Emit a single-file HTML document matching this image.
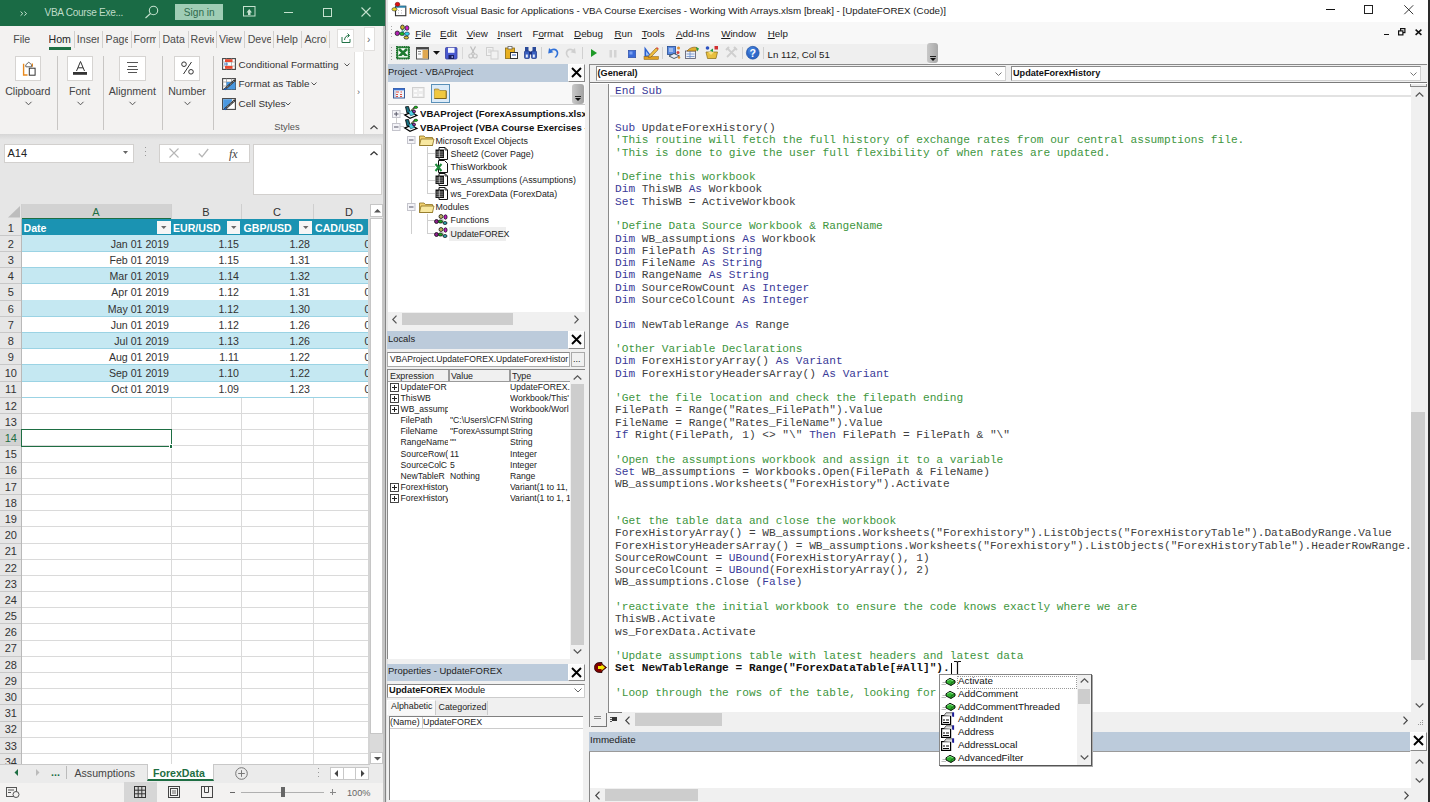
<!DOCTYPE html>
<html><head><meta charset="utf-8">
<style>
*{margin:0;padding:0;box-sizing:border-box}
html,body{width:1430px;height:802px;overflow:hidden;background:#f0f0f0;font-family:"Liberation Sans",sans-serif}
div,span{position:absolute}
.t{white-space:nowrap;line-height:1}
.clip{overflow:hidden}
svg{position:absolute;overflow:visible}
.code{font-family:"Liberation Mono",monospace;font-size:11.17px;line-height:12.28px;white-space:pre;color:#404040}
.code span{position:static}
.kw{color:#3a3a98}
.cm{color:#409640}
</style></head><body>
<div style="left:0px;top:0px;width:386px;height:802px;background:#e6e6e6"></div>
<div style="left:0px;top:0px;width:386px;height:26px;background:#1a6b45"></div>
<svg style="left:20px;top:10.5px" width="8" height="6" viewBox="0 0 8 6"><path d="M0.6 0.6 L2.8 2.6 L0.6 4.6 M4.4 0.6 L6.6 2.6 L4.4 4.6" fill="none" stroke="#c5e2cf" stroke-width="1"/></svg>
<div class="t" style="left:44.5px;top:7.81px;font-size:10.1px;color:#bfdcc8;font-weight:normal;letter-spacing:-0.3px">VBA Course Exe...</div>
<svg style="left:144px;top:5px" width="16" height="14" viewBox="0 0 16 14"><circle cx="9.5" cy="5.5" r="4.2" fill="none" stroke="#c5e2cf" stroke-width="1.1"/><line x1="6.5" y1="8.5" x2="1.5" y2="13" stroke="#c5e2cf" stroke-width="1.1"/></svg>
<div style="left:175px;top:4px;width:48px;height:16px;background:#9fcdb5"></div>
<div class="t" style="left:183.8px;top:7.62px;font-size:10.1px;color:#2e6a4c;font-weight:normal;">Sign in</div>
<svg style="left:243px;top:6px" width="13" height="11" viewBox="0 0 13 11"><rect x="0.5" y="0.5" width="11.5" height="9.5" fill="none" stroke="#c5e2cf" stroke-width="1"/><path d="M6.25 3 L3.5 6.5 H5 V9 H7.5 V6.5 H9 Z" fill="#c5e2cf"/></svg>
<div style="left:284px;top:12px;width:9px;height:1px;background:#c5e2cf"></div>
<div style="left:323px;top:8px;width:9px;height:9px;border:1px solid #c5e2cf"></div>
<svg style="left:361px;top:7px" width="10" height="10" viewBox="0 0 10 10"><path d="M0.5 0.5 L9.5 9.5 M9.5 0.5 L0.5 9.5" stroke="#c5e2cf" stroke-width="1.1"/></svg>
<div style="left:0px;top:26px;width:386px;height:108px;background:#f3f2f1"></div>
<div style="left:0px;top:134px;width:386px;height:6px;background:linear-gradient(#d6d6d6,#e6e6e6)"></div>
<div class="clip" style="left:13.2px;top:30px;width:17.5px;height:18px">
<div class="t" style="left:0;top:4.19px;font-size:10.6px;color:#4a4a4a">File</div></div>
<div class="clip" style="left:48.5px;top:30px;width:22.8px;height:18px">
<div class="t" style="left:0;top:4.19px;font-size:10.6px;color:#262626">Home</div></div>
<div class="clip" style="left:76.8px;top:30px;width:21.9px;height:18px">
<div class="t" style="left:0;top:4.19px;font-size:10.6px;color:#4a4a4a">Insert</div></div>
<div class="clip" style="left:105.6px;top:30px;width:22.9px;height:18px">
<div class="t" style="left:0;top:4.19px;font-size:10.6px;color:#4a4a4a">Page</div></div>
<div class="clip" style="left:133.6px;top:30px;width:22.7px;height:18px">
<div class="t" style="left:0;top:4.19px;font-size:10.6px;color:#4a4a4a">Formulas</div></div>
<div class="clip" style="left:162.4px;top:30px;width:22.4px;height:18px">
<div class="t" style="left:0;top:4.19px;font-size:10.6px;color:#4a4a4a">Data</div></div>
<div class="clip" style="left:190.6px;top:30px;width:23.0px;height:18px">
<div class="t" style="left:0;top:4.19px;font-size:10.6px;color:#4a4a4a">Review</div></div>
<div class="clip" style="left:218.9px;top:30px;width:23.0px;height:18px">
<div class="t" style="left:0;top:4.19px;font-size:10.6px;color:#4a4a4a">View</div></div>
<div class="clip" style="left:247.7px;top:30px;width:23.0px;height:18px">
<div class="t" style="left:0;top:4.19px;font-size:10.6px;color:#4a4a4a">Developer</div></div>
<div class="clip" style="left:276.2px;top:30px;width:22.7px;height:18px">
<div class="t" style="left:0;top:4.19px;font-size:10.6px;color:#4a4a4a">Help</div></div>
<div class="clip" style="left:304.4px;top:30px;width:23.1px;height:18px">
<div class="t" style="left:0;top:4.19px;font-size:10.6px;color:#4a4a4a">Acrobat</div></div>
<div style="left:48.5px;top:47px;width:22.5px;height:3px;background:#1e6e43"></div>
<div style="left:73.5px;top:31px;width:1px;height:17px;background:#d2d0ce"></div>
<div style="left:102px;top:31px;width:1px;height:17px;background:#d2d0ce"></div>
<div style="left:130.6px;top:31px;width:1px;height:17px;background:#d2d0ce"></div>
<div style="left:159px;top:31px;width:1px;height:17px;background:#d2d0ce"></div>
<div style="left:187.9px;top:31px;width:1px;height:17px;background:#d2d0ce"></div>
<div style="left:215.9px;top:31px;width:1px;height:17px;background:#d2d0ce"></div>
<div style="left:244.4px;top:31px;width:1px;height:17px;background:#d2d0ce"></div>
<div style="left:272.9px;top:31px;width:1px;height:17px;background:#d2d0ce"></div>
<div style="left:300.9px;top:31px;width:1px;height:17px;background:#d2d0ce"></div>
<div style="left:329px;top:31px;width:1px;height:17px;background:#d2d0ce"></div>
<div style="left:337px;top:29px;width:17px;height:19px;background:#fff;border:1px solid #e1dfdd"></div>
<svg style="left:340px;top:32px" width="12" height="12" viewBox="0 0 12 12"><path d="M2 5 V10.5 H10 V7" fill="none" stroke="#217346" stroke-width="1"/><path d="M4.5 8 Q5 3.5 9 3.5 M7.5 1.5 L9.5 3.5 L7.5 5.5" fill="none" stroke="#217346" stroke-width="1"/></svg>
<div style="left:364px;top:27px;width:11px;height:24px;background:#fff;border:1px solid #e1dfdd"></div>
<div class="t" style="left:367px;top:34.50px;font-size:10px;color:#666;font-weight:normal;">›</div>
<div style="left:15px;top:56px;width:26px;height:25px;background:#fff;border:1px solid #d6d4d2"></div>
<div style="left:66.5px;top:56px;width:26.0px;height:25px;background:#fff;border:1px solid #d6d4d2"></div>
<div style="left:119px;top:56px;width:27px;height:25px;background:#fff;border:1px solid #d6d4d2"></div>
<div style="left:174px;top:56px;width:26px;height:25px;background:#fff;border:1px solid #d6d4d2"></div>
<div style="left:56.5px;top:56px;width:1px;height:74px;background:#c8c6c4"></div>
<div style="left:102.5px;top:56px;width:1px;height:74px;background:#c8c6c4"></div>
<div style="left:161.8px;top:56px;width:1px;height:74px;background:#c8c6c4"></div>
<div style="left:212.5px;top:56px;width:1px;height:74px;background:#c8c6c4"></div>
<svg style="left:22px;top:60.5px" width="15" height="15" viewBox="0 0 15 15"><path d="M1.6 2.8 V14 H5.5" fill="none" stroke="#e8891c" stroke-width="1.4"/><path d="M10.3 2.5 V5.8" stroke="#e8891c" stroke-width="1.4"/><path d="M3.8 5.8 V3.8 L6.8 1.2 L9.6 3.8 V5.8 Z" fill="#fff" stroke="#666" stroke-width="1"/><rect x="7.3" y="7.2" width="5.8" height="7" fill="#fff" stroke="#333" stroke-width="1"/></svg>
<svg style="left:73px;top:60px" width="15" height="16" viewBox="0 0 15 16"><path d="M3.5 11 L7.5 1.5 L11.5 11 M5 7.8 H10" fill="none" stroke="#333" stroke-width="1"/><rect x="0" y="12" width="14" height="2.8" fill="#333"/></svg>
<div style="left:126.5px;top:62.2px;width:11.5px;height:1px;background:#555"></div>
<div style="left:128px;top:65.6px;width:9px;height:1px;background:#555"></div>
<div style="left:126.5px;top:69px;width:11.5px;height:1px;background:#555"></div>
<div style="left:128px;top:72.4px;width:9px;height:1px;background:#555"></div>
<svg style="left:181px;top:61px" width="13" height="14" viewBox="0 0 13 14"><circle cx="3" cy="3.2" r="2.3" fill="none" stroke="#333" stroke-width="1"/><circle cx="10" cy="10.8" r="2.3" fill="none" stroke="#333" stroke-width="1"/><path d="M10.5 1 L2.5 13" stroke="#333" stroke-width="1"/></svg>
<div class="t" style="left:-72.2px;width:200px;text-align:center;top:85.79px;font-size:10.6px;color:#444;font-weight:normal;">Clipboard</div>
<svg style="left:24.8px;top:101px" width="7" height="5" viewBox="0 0 7 5"><path d="M0.5 0.8 L3.5 3.8 L6.5 0.8" fill="none" stroke="#555" stroke-width="1"/></svg>
<div class="t" style="left:-20.400000000000006px;width:200px;text-align:center;top:85.79px;font-size:10.6px;color:#444;font-weight:normal;">Font</div>
<svg style="left:76.6px;top:101px" width="7" height="5" viewBox="0 0 7 5"><path d="M0.5 0.8 L3.5 3.8 L6.5 0.8" fill="none" stroke="#555" stroke-width="1"/></svg>
<div class="t" style="left:32.30000000000001px;width:200px;text-align:center;top:85.79px;font-size:10.6px;color:#444;font-weight:normal;">Alignment</div>
<svg style="left:129.3px;top:101px" width="7" height="5" viewBox="0 0 7 5"><path d="M0.5 0.8 L3.5 3.8 L6.5 0.8" fill="none" stroke="#555" stroke-width="1"/></svg>
<div class="t" style="left:87px;width:200px;text-align:center;top:85.79px;font-size:10.6px;color:#444;font-weight:normal;">Number</div>
<svg style="left:184px;top:101px" width="7" height="5" viewBox="0 0 7 5"><path d="M0.5 0.8 L3.5 3.8 L6.5 0.8" fill="none" stroke="#555" stroke-width="1"/></svg>
<svg style="left:222px;top:58px" width="14" height="12" viewBox="0 0 14 12"><rect x="0.6" y="0.6" width="12.8" height="10.8" fill="#fff" stroke="#444" stroke-width="1.1"/><path d="M4.5 0.6V11.4M9.5 0.6V11.4M0.6 4H13.4M0.6 8H13.4" stroke="#aaa" stroke-width="0.8"/><rect x="3" y="1.2" width="7.5" height="2.8" fill="#e84a30"/><rect x="3" y="8" width="7.5" height="2.8" fill="#e84a30"/><rect x="2.5" y="4.8" width="1" height="2.5" fill="#2a70c8"/><rect x="4.5" y="4.8" width="1" height="2.5" fill="#2a70c8"/></svg>
<div class="t" style="left:238.5px;top:60.04px;font-size:9.95px;color:#333;font-weight:normal;">Conditional Formatting</div>
<svg style="left:344px;top:63px" width="6" height="4" viewBox="0 0 6 4"><path d="M0.5 0.5 L3 3 L5.5 0.5" fill="none" stroke="#555"/></svg>
<svg style="left:222px;top:78px" width="14" height="12" viewBox="0 0 14 12"><rect x="0.6" y="0.6" width="12.8" height="10.8" fill="#fff" stroke="#444" stroke-width="1.1"/><path d="M4.5 0.6V11.4M9.5 0.6V11.4M0.6 4H13.4M0.6 8H13.4" stroke="#999" stroke-width="0.8"/><path d="M4.5 4 H13.4 V11.4 H4.5 Z" fill="#4a98e0"/><path d="M2.5 11.5 L13 2" stroke="#333" stroke-width="2.2"/><path d="M3.5 10.6 L12.5 2.6" stroke="#eee" stroke-width="0.7" stroke-dasharray="1 1"/><path d="M1.5 11.8 Q3 9.5 5 10 L3.5 12 Z" fill="#1a60c0"/></svg>
<div class="t" style="left:238.5px;top:79.04px;font-size:9.95px;color:#333;font-weight:normal;">Format as Table</div>
<svg style="left:311px;top:82px" width="6" height="4" viewBox="0 0 6 4"><path d="M0.5 0.5 L3 3 L5.5 0.5" fill="none" stroke="#555"/></svg>
<svg style="left:222px;top:97.5px" width="14" height="12" viewBox="0 0 14 12"><rect x="0.6" y="0.6" width="12.8" height="10.8" fill="#fff" stroke="#444" stroke-width="1.1"/><path d="M1.2 1.2 H10 V3 L3 10.8 H1.2 Z" fill="#4a98e0"/><path d="M2.5 11.5 L13 2" stroke="#333" stroke-width="2.2"/><path d="M3.5 10.6 L12.5 2.6" stroke="#eee" stroke-width="0.7" stroke-dasharray="1 1"/><path d="M1.5 11.8 Q3 9.5 5 10 L3.5 12 Z" fill="#1a60c0"/></svg>
<div class="t" style="left:238.5px;top:98.54px;font-size:9.95px;color:#333;font-weight:normal;">Cell Styles</div>
<svg style="left:285px;top:101.5px" width="6" height="4" viewBox="0 0 6 4"><path d="M0.5 0.5 L3 3 L5.5 0.5" fill="none" stroke="#555"/></svg>
<div class="t" style="left:187px;width:200px;text-align:center;top:123.09px;font-size:9.3px;color:#555;font-weight:normal;">Styles</div>
<div style="left:354px;top:52px;width:10px;height:82px;background:#fff;border-left:1px solid #e1dfdd;border-right:1px solid #e1dfdd"></div>
<div class="t" style="left:357px;top:88.35px;font-size:9px;color:#666;font-weight:normal;">›</div>
<svg style="left:370px;top:125px" width="8" height="5" viewBox="0 0 8 5"><path d="M0.5 4 L4 0.8 L7.5 4" fill="none" stroke="#444" stroke-width="1.1"/></svg>
<div style="left:3.5px;top:143.5px;width:130px;height:19px;background:#fff;border:1px solid #d2d0ce"></div>
<div class="t" style="left:7.5px;top:148.15px;font-size:11px;color:#222;font-weight:normal;">A14</div>
<svg style="left:123px;top:151px" width="6" height="4" viewBox="0 0 6 4"><path d="M0 0 H5 L2.5 3 Z" fill="#666"/></svg>
<div style="left:144.5px;top:147px;width:1.2px;height:1.2px;background:#999"></div>
<div style="left:144.5px;top:151px;width:1.2px;height:1.2px;background:#999"></div>
<div style="left:144.5px;top:155px;width:1.2px;height:1.2px;background:#999"></div>
<div style="left:158.5px;top:143.5px;width:91px;height:19px;background:#fff;border:1px solid #d2d0ce"></div>
<svg style="left:169px;top:148px" width="10" height="10" viewBox="0 0 10 10"><path d="M0.5 0.5 L9.5 9.5 M9.5 0.5 L0.5 9.5" stroke="#b5b5b5" stroke-width="1.1"/></svg>
<svg style="left:198px;top:148px" width="11" height="10" viewBox="0 0 11 10"><path d="M0.8 5.5 L4 8.8 L10.2 1" fill="none" stroke="#b5b5b5" stroke-width="1.3"/></svg>
<div class="t" style="left:229px;top:147.80px;font-size:12px;color:#444;font-weight:normal;font-family:'Liberation Serif';font-style:italic">fx</div>
<div style="left:252.5px;top:143.5px;width:129px;height:51px;background:#fff;border:1px solid #d2d0ce"></div>
<svg style="left:370px;top:151px" width="8" height="5" viewBox="0 0 8 5"><path d="M0.5 4 L4 0.8 L7.5 4" fill="none" stroke="#333" stroke-width="1.3"/></svg>
<div style="left:0px;top:203.5px;width:370px;height:16px;background:#e6e6e6"></div>
<div style="left:21.5px;top:203.5px;width:149.5px;height:15.8px;background:#d2d2d2"></div>
<svg style="left:4px;top:206px" width="17" height="12" viewBox="0 0 17 12"><path d="M16 0 V11.5 H4 Z" fill="#bdbdbd"/></svg>
<div style="left:171px;top:203.5px;width:1px;height:16px;background:#cfcfcf"></div>
<div style="left:241px;top:203.5px;width:1px;height:16px;background:#cfcfcf"></div>
<div style="left:312.8px;top:203.5px;width:1px;height:16px;background:#cfcfcf"></div>
<div style="left:21px;top:203.5px;width:1px;height:16px;background:#cfcfcf"></div>
<div class="t" style="left:-4px;width:200px;text-align:center;top:206.65px;font-size:11px;color:#1e6e43;font-weight:normal;">A</div>
<div class="t" style="left:106px;width:200px;text-align:center;top:206.65px;font-size:11px;color:#333;font-weight:normal;">B</div>
<div class="t" style="left:177px;width:200px;text-align:center;top:206.65px;font-size:11px;color:#333;font-weight:normal;">C</div>
<div class="t" style="left:249px;width:200px;text-align:center;top:206.65px;font-size:11px;color:#333;font-weight:normal;">D</div>
<div style="left:21.5px;top:219.3px;width:348.5px;height:544.7px;background:#fff"></div>
<div style="left:21.5px;top:218px;width:149.5px;height:2px;background:#1e6e43"></div>
<div style="left:0px;top:219.3px;width:21.5px;height:544.7px;background:#e6e6e6"></div>
<div class="t" style="left:-89.2px;width:200px;text-align:center;top:222.55px;font-size:11px;color:#333;font-weight:normal;">1</div>
<div style="left:0px;top:234.89000000000001px;width:21.5px;height:1px;background:#c8c8c8"></div>
<div class="t" style="left:-89.2px;width:200px;text-align:center;top:238.74px;font-size:11px;color:#333;font-weight:normal;">2</div>
<div style="left:0px;top:251.08px;width:21.5px;height:1px;background:#c8c8c8"></div>
<div class="t" style="left:-89.2px;width:200px;text-align:center;top:254.93px;font-size:11px;color:#333;font-weight:normal;">3</div>
<div style="left:0px;top:267.27px;width:21.5px;height:1px;background:#c8c8c8"></div>
<div class="t" style="left:-89.2px;width:200px;text-align:center;top:271.12px;font-size:11px;color:#333;font-weight:normal;">4</div>
<div style="left:0px;top:283.46px;width:21.5px;height:1px;background:#c8c8c8"></div>
<div class="t" style="left:-89.2px;width:200px;text-align:center;top:287.31px;font-size:11px;color:#333;font-weight:normal;">5</div>
<div style="left:0px;top:299.65px;width:21.5px;height:1px;background:#c8c8c8"></div>
<div class="t" style="left:-89.2px;width:200px;text-align:center;top:303.50px;font-size:11px;color:#333;font-weight:normal;">6</div>
<div style="left:0px;top:315.84px;width:21.5px;height:1px;background:#c8c8c8"></div>
<div class="t" style="left:-89.2px;width:200px;text-align:center;top:319.69px;font-size:11px;color:#333;font-weight:normal;">7</div>
<div style="left:0px;top:332.03000000000003px;width:21.5px;height:1px;background:#c8c8c8"></div>
<div class="t" style="left:-89.2px;width:200px;text-align:center;top:335.88px;font-size:11px;color:#333;font-weight:normal;">8</div>
<div style="left:0px;top:348.21999999999997px;width:21.5px;height:1px;background:#c8c8c8"></div>
<div class="t" style="left:-89.2px;width:200px;text-align:center;top:352.07px;font-size:11px;color:#333;font-weight:normal;">9</div>
<div style="left:0px;top:364.41px;width:21.5px;height:1px;background:#c8c8c8"></div>
<div class="t" style="left:-89.2px;width:200px;text-align:center;top:368.26px;font-size:11px;color:#333;font-weight:normal;">10</div>
<div style="left:0px;top:380.59999999999997px;width:21.5px;height:1px;background:#c8c8c8"></div>
<div class="t" style="left:-89.2px;width:200px;text-align:center;top:384.45px;font-size:11px;color:#333;font-weight:normal;">11</div>
<div style="left:0px;top:396.79px;width:21.5px;height:1px;background:#c8c8c8"></div>
<div class="t" style="left:-89.2px;width:200px;text-align:center;top:400.64px;font-size:11px;color:#333;font-weight:normal;">12</div>
<div style="left:0px;top:412.97999999999996px;width:21.5px;height:1px;background:#c8c8c8"></div>
<div class="t" style="left:-89.2px;width:200px;text-align:center;top:416.83px;font-size:11px;color:#333;font-weight:normal;">13</div>
<div style="left:0px;top:429.17px;width:21.5px;height:1px;background:#c8c8c8"></div>
<div style="left:0px;top:429.77000000000004px;width:21.5px;height:16.19px;background:#d2d2d2"></div>
<div class="t" style="left:-89.2px;width:200px;text-align:center;top:433.02px;font-size:11px;color:#1e6e43;font-weight:normal;">14</div>
<div style="left:0px;top:445.36px;width:21.5px;height:1px;background:#c8c8c8"></div>
<div class="t" style="left:-89.2px;width:200px;text-align:center;top:449.21px;font-size:11px;color:#333;font-weight:normal;">15</div>
<div style="left:0px;top:461.55px;width:21.5px;height:1px;background:#c8c8c8"></div>
<div class="t" style="left:-89.2px;width:200px;text-align:center;top:465.40px;font-size:11px;color:#333;font-weight:normal;">16</div>
<div style="left:0px;top:477.74px;width:21.5px;height:1px;background:#c8c8c8"></div>
<div class="t" style="left:-89.2px;width:200px;text-align:center;top:481.59px;font-size:11px;color:#333;font-weight:normal;">17</div>
<div style="left:0px;top:493.93px;width:21.5px;height:1px;background:#c8c8c8"></div>
<div class="t" style="left:-89.2px;width:200px;text-align:center;top:497.78px;font-size:11px;color:#333;font-weight:normal;">18</div>
<div style="left:0px;top:510.12px;width:21.5px;height:1px;background:#c8c8c8"></div>
<div class="t" style="left:-89.2px;width:200px;text-align:center;top:513.97px;font-size:11px;color:#333;font-weight:normal;">19</div>
<div style="left:0px;top:526.3100000000001px;width:21.5px;height:1px;background:#c8c8c8"></div>
<div class="t" style="left:-89.2px;width:200px;text-align:center;top:530.16px;font-size:11px;color:#333;font-weight:normal;">20</div>
<div style="left:0px;top:542.5000000000001px;width:21.5px;height:1px;background:#c8c8c8"></div>
<div class="t" style="left:-89.2px;width:200px;text-align:center;top:546.35px;font-size:11px;color:#333;font-weight:normal;">21</div>
<div style="left:0px;top:558.69px;width:21.5px;height:1px;background:#c8c8c8"></div>
<div class="t" style="left:-89.2px;width:200px;text-align:center;top:562.54px;font-size:11px;color:#333;font-weight:normal;">22</div>
<div style="left:0px;top:574.88px;width:21.5px;height:1px;background:#c8c8c8"></div>
<div class="t" style="left:-89.2px;width:200px;text-align:center;top:578.73px;font-size:11px;color:#333;font-weight:normal;">23</div>
<div style="left:0px;top:591.07px;width:21.5px;height:1px;background:#c8c8c8"></div>
<div class="t" style="left:-89.2px;width:200px;text-align:center;top:594.92px;font-size:11px;color:#333;font-weight:normal;">24</div>
<div style="left:0px;top:607.2600000000001px;width:21.5px;height:1px;background:#c8c8c8"></div>
<div class="t" style="left:-89.2px;width:200px;text-align:center;top:611.11px;font-size:11px;color:#333;font-weight:normal;">25</div>
<div style="left:0px;top:623.4500000000002px;width:21.5px;height:1px;background:#c8c8c8"></div>
<div class="t" style="left:-89.2px;width:200px;text-align:center;top:627.30px;font-size:11px;color:#333;font-weight:normal;">26</div>
<div style="left:0px;top:639.6400000000001px;width:21.5px;height:1px;background:#c8c8c8"></div>
<div class="t" style="left:-89.2px;width:200px;text-align:center;top:643.49px;font-size:11px;color:#333;font-weight:normal;">27</div>
<div style="left:0px;top:655.83px;width:21.5px;height:1px;background:#c8c8c8"></div>
<div class="t" style="left:-89.2px;width:200px;text-align:center;top:659.68px;font-size:11px;color:#333;font-weight:normal;">28</div>
<div style="left:0px;top:672.0200000000001px;width:21.5px;height:1px;background:#c8c8c8"></div>
<div class="t" style="left:-89.2px;width:200px;text-align:center;top:675.87px;font-size:11px;color:#333;font-weight:normal;">29</div>
<div style="left:0px;top:688.2100000000002px;width:21.5px;height:1px;background:#c8c8c8"></div>
<div class="t" style="left:-89.2px;width:200px;text-align:center;top:692.06px;font-size:11px;color:#333;font-weight:normal;">30</div>
<div style="left:0px;top:704.4000000000001px;width:21.5px;height:1px;background:#c8c8c8"></div>
<div class="t" style="left:-89.2px;width:200px;text-align:center;top:708.25px;font-size:11px;color:#333;font-weight:normal;">31</div>
<div style="left:0px;top:720.59px;width:21.5px;height:1px;background:#c8c8c8"></div>
<div class="t" style="left:-89.2px;width:200px;text-align:center;top:724.44px;font-size:11px;color:#333;font-weight:normal;">32</div>
<div style="left:0px;top:736.7800000000001px;width:21.5px;height:1px;background:#c8c8c8"></div>
<div class="t" style="left:-89.2px;width:200px;text-align:center;top:740.63px;font-size:11px;color:#333;font-weight:normal;">33</div>
<div style="left:0px;top:752.9700000000001px;width:21.5px;height:1px;background:#c8c8c8"></div>
<div class="t" style="left:-89.2px;width:200px;text-align:center;top:756.82px;font-size:11px;color:#333;font-weight:normal;">34</div>
<div style="left:0px;top:769.1600000000002px;width:21.5px;height:1px;background:#c8c8c8"></div>
<div style="left:21px;top:219.3px;width:1px;height:545px;background:#b9b9b9"></div>
<div style="left:21.5px;top:234.89000000000001px;width:348.5px;height:1px;background:#9bd3e4"></div>
<div style="left:21.5px;top:251.08px;width:348.5px;height:1px;background:#9bd3e4"></div>
<div style="left:21.5px;top:267.27px;width:348.5px;height:1px;background:#9bd3e4"></div>
<div style="left:21.5px;top:283.46px;width:348.5px;height:1px;background:#9bd3e4"></div>
<div style="left:21.5px;top:299.65px;width:348.5px;height:1px;background:#9bd3e4"></div>
<div style="left:21.5px;top:315.84000000000003px;width:348.5px;height:1px;background:#9bd3e4"></div>
<div style="left:21.5px;top:332.03px;width:348.5px;height:1px;background:#9bd3e4"></div>
<div style="left:21.5px;top:348.22px;width:348.5px;height:1px;background:#9bd3e4"></div>
<div style="left:21.5px;top:364.40999999999997px;width:348.5px;height:1px;background:#9bd3e4"></div>
<div style="left:21.5px;top:380.6px;width:348.5px;height:1px;background:#9bd3e4"></div>
<div style="left:21.5px;top:396.78999999999996px;width:348.5px;height:1px;background:#9bd3e4"></div>
<div style="left:21.5px;top:412.98px;width:348.5px;height:1px;background:#dadada"></div>
<div style="left:21.5px;top:429.17px;width:348.5px;height:1px;background:#dadada"></div>
<div style="left:21.5px;top:445.36px;width:348.5px;height:1px;background:#dadada"></div>
<div style="left:21.5px;top:461.55px;width:348.5px;height:1px;background:#dadada"></div>
<div style="left:21.5px;top:477.74px;width:348.5px;height:1px;background:#dadada"></div>
<div style="left:21.5px;top:493.93px;width:348.5px;height:1px;background:#dadada"></div>
<div style="left:21.5px;top:510.12px;width:348.5px;height:1px;background:#dadada"></div>
<div style="left:21.5px;top:526.3100000000001px;width:348.5px;height:1px;background:#dadada"></div>
<div style="left:21.5px;top:542.5px;width:348.5px;height:1px;background:#dadada"></div>
<div style="left:21.5px;top:558.6899999999999px;width:348.5px;height:1px;background:#dadada"></div>
<div style="left:21.5px;top:574.88px;width:348.5px;height:1px;background:#dadada"></div>
<div style="left:21.5px;top:591.07px;width:348.5px;height:1px;background:#dadada"></div>
<div style="left:21.5px;top:607.2600000000001px;width:348.5px;height:1px;background:#dadada"></div>
<div style="left:21.5px;top:623.45px;width:348.5px;height:1px;background:#dadada"></div>
<div style="left:21.5px;top:639.64px;width:348.5px;height:1px;background:#dadada"></div>
<div style="left:21.5px;top:655.83px;width:348.5px;height:1px;background:#dadada"></div>
<div style="left:21.5px;top:672.0200000000001px;width:348.5px;height:1px;background:#dadada"></div>
<div style="left:21.5px;top:688.21px;width:348.5px;height:1px;background:#dadada"></div>
<div style="left:21.5px;top:704.4px;width:348.5px;height:1px;background:#dadada"></div>
<div style="left:21.5px;top:720.59px;width:348.5px;height:1px;background:#dadada"></div>
<div style="left:21.5px;top:736.7800000000001px;width:348.5px;height:1px;background:#dadada"></div>
<div style="left:21.5px;top:752.9700000000001px;width:348.5px;height:1px;background:#dadada"></div>
<div style="left:21.5px;top:769.16px;width:348.5px;height:1px;background:#dadada"></div>
<div style="left:171px;top:397.39px;width:1px;height:366.61px;background:#dadada"></div>
<div style="left:241px;top:397.39px;width:1px;height:366.61px;background:#dadada"></div>
<div style="left:312.8px;top:397.39px;width:1px;height:366.61px;background:#dadada"></div>
<div style="left:21.5px;top:219.3px;width:348.5px;height:16.19px;background:#1b93b2"></div>
<div class="t" style="left:23.5px;top:222.69px;font-size:10.6px;color:#fff;font-weight:bold;">Date</div>
<div style="left:157.0px;top:221.0px;width:13.6px;height:13.2px;background:#f6f6f6"></div>
<svg style="left:161.3px;top:226.10000000000002px" width="6" height="4" viewBox="0 0 6 4"><path d="M0 0 H5.5 L2.75 3 Z" fill="#6a6a6a"/></svg>
<div class="t" style="left:173px;top:222.69px;font-size:10.6px;color:#fff;font-weight:bold;">EUR/USD</div>
<div style="left:226.5px;top:221.0px;width:13.6px;height:13.2px;background:#f6f6f6"></div>
<svg style="left:230.8px;top:226.10000000000002px" width="6" height="4" viewBox="0 0 6 4"><path d="M0 0 H5.5 L2.75 3 Z" fill="#6a6a6a"/></svg>
<div class="t" style="left:243.5px;top:222.69px;font-size:10.6px;color:#fff;font-weight:bold;">GBP/USD</div>
<div style="left:298.5px;top:221.0px;width:13.6px;height:13.2px;background:#f6f6f6"></div>
<svg style="left:302.8px;top:226.10000000000002px" width="6" height="4" viewBox="0 0 6 4"><path d="M0 0 H5.5 L2.75 3 Z" fill="#6a6a6a"/></svg>
<div class="t" style="left:315px;top:222.69px;font-size:10.6px;color:#fff;font-weight:bold;">CAD/USD</div>
<div style="left:21.5px;top:235.49px;width:348.5px;height:15.590000000000002px;background:#c5e8f2"></div>
<div style="left:171px;top:235.49px;width:1px;height:16.19px;background:rgba(255,255,255,0.0)"></div>
<div style="left:241px;top:235.49px;width:1px;height:16.19px;background:rgba(255,255,255,0.0)"></div>
<div style="left:312.8px;top:235.49px;width:1px;height:16.19px;background:rgba(255,255,255,0.0)"></div>
<div class="t" style="left:-131px;width:300px;text-align:right;top:238.78px;font-size:10.6px;color:#333;font-weight:normal;">Jan 01 2019</div>
<div class="t" style="left:-61px;width:300px;text-align:right;top:238.78px;font-size:10.6px;color:#333;font-weight:normal;">1.15</div>
<div class="t" style="left:10px;width:300px;text-align:right;top:238.78px;font-size:10.6px;color:#333;font-weight:normal;">1.28</div>
<div class="t" style="left:70.5px;width:300px;text-align:right;top:238.78px;font-size:10.6px;color:#333;font-weight:normal;">0</div>
<div style="left:21.5px;top:251.08px;width:348.5px;height:1px;background:#9bd3e4"></div>
<div style="left:171px;top:251.68px;width:1px;height:16.19px;background:rgba(255,255,255,0.0)"></div>
<div style="left:241px;top:251.68px;width:1px;height:16.19px;background:rgba(255,255,255,0.0)"></div>
<div style="left:312.8px;top:251.68px;width:1px;height:16.19px;background:rgba(255,255,255,0.0)"></div>
<div class="t" style="left:-131px;width:300px;text-align:right;top:254.97px;font-size:10.6px;color:#333;font-weight:normal;">Feb 01 2019</div>
<div class="t" style="left:-61px;width:300px;text-align:right;top:254.97px;font-size:10.6px;color:#333;font-weight:normal;">1.15</div>
<div class="t" style="left:10px;width:300px;text-align:right;top:254.97px;font-size:10.6px;color:#333;font-weight:normal;">1.31</div>
<div class="t" style="left:70.5px;width:300px;text-align:right;top:254.97px;font-size:10.6px;color:#333;font-weight:normal;">0</div>
<div style="left:21.5px;top:267.27px;width:348.5px;height:1px;background:#9bd3e4"></div>
<div style="left:21.5px;top:267.87px;width:348.5px;height:15.590000000000002px;background:#c5e8f2"></div>
<div style="left:171px;top:267.87px;width:1px;height:16.19px;background:rgba(255,255,255,0.0)"></div>
<div style="left:241px;top:267.87px;width:1px;height:16.19px;background:rgba(255,255,255,0.0)"></div>
<div style="left:312.8px;top:267.87px;width:1px;height:16.19px;background:rgba(255,255,255,0.0)"></div>
<div class="t" style="left:-131px;width:300px;text-align:right;top:271.16px;font-size:10.6px;color:#333;font-weight:normal;">Mar 01 2019</div>
<div class="t" style="left:-61px;width:300px;text-align:right;top:271.16px;font-size:10.6px;color:#333;font-weight:normal;">1.14</div>
<div class="t" style="left:10px;width:300px;text-align:right;top:271.16px;font-size:10.6px;color:#333;font-weight:normal;">1.32</div>
<div class="t" style="left:70.5px;width:300px;text-align:right;top:271.16px;font-size:10.6px;color:#333;font-weight:normal;">0</div>
<div style="left:21.5px;top:283.46px;width:348.5px;height:1px;background:#9bd3e4"></div>
<div style="left:171px;top:284.06px;width:1px;height:16.19px;background:rgba(255,255,255,0.0)"></div>
<div style="left:241px;top:284.06px;width:1px;height:16.19px;background:rgba(255,255,255,0.0)"></div>
<div style="left:312.8px;top:284.06px;width:1px;height:16.19px;background:rgba(255,255,255,0.0)"></div>
<div class="t" style="left:-131px;width:300px;text-align:right;top:287.35px;font-size:10.6px;color:#333;font-weight:normal;">Apr 01 2019</div>
<div class="t" style="left:-61px;width:300px;text-align:right;top:287.35px;font-size:10.6px;color:#333;font-weight:normal;">1.12</div>
<div class="t" style="left:10px;width:300px;text-align:right;top:287.35px;font-size:10.6px;color:#333;font-weight:normal;">1.31</div>
<div class="t" style="left:70.5px;width:300px;text-align:right;top:287.35px;font-size:10.6px;color:#333;font-weight:normal;">0</div>
<div style="left:21.5px;top:299.65px;width:348.5px;height:1px;background:#9bd3e4"></div>
<div style="left:21.5px;top:300.25px;width:348.5px;height:15.590000000000002px;background:#c5e8f2"></div>
<div style="left:171px;top:300.25px;width:1px;height:16.19px;background:rgba(255,255,255,0.0)"></div>
<div style="left:241px;top:300.25px;width:1px;height:16.19px;background:rgba(255,255,255,0.0)"></div>
<div style="left:312.8px;top:300.25px;width:1px;height:16.19px;background:rgba(255,255,255,0.0)"></div>
<div class="t" style="left:-131px;width:300px;text-align:right;top:303.54px;font-size:10.6px;color:#333;font-weight:normal;">May 01 2019</div>
<div class="t" style="left:-61px;width:300px;text-align:right;top:303.54px;font-size:10.6px;color:#333;font-weight:normal;">1.12</div>
<div class="t" style="left:10px;width:300px;text-align:right;top:303.54px;font-size:10.6px;color:#333;font-weight:normal;">1.30</div>
<div class="t" style="left:70.5px;width:300px;text-align:right;top:303.54px;font-size:10.6px;color:#333;font-weight:normal;">0</div>
<div style="left:21.5px;top:315.84px;width:348.5px;height:1px;background:#9bd3e4"></div>
<div style="left:171px;top:316.44000000000005px;width:1px;height:16.19px;background:rgba(255,255,255,0.0)"></div>
<div style="left:241px;top:316.44000000000005px;width:1px;height:16.19px;background:rgba(255,255,255,0.0)"></div>
<div style="left:312.8px;top:316.44000000000005px;width:1px;height:16.19px;background:rgba(255,255,255,0.0)"></div>
<div class="t" style="left:-131px;width:300px;text-align:right;top:319.73px;font-size:10.6px;color:#333;font-weight:normal;">Jun 01 2019</div>
<div class="t" style="left:-61px;width:300px;text-align:right;top:319.73px;font-size:10.6px;color:#333;font-weight:normal;">1.12</div>
<div class="t" style="left:10px;width:300px;text-align:right;top:319.73px;font-size:10.6px;color:#333;font-weight:normal;">1.26</div>
<div class="t" style="left:70.5px;width:300px;text-align:right;top:319.73px;font-size:10.6px;color:#333;font-weight:normal;">0</div>
<div style="left:21.5px;top:332.03000000000003px;width:348.5px;height:1px;background:#9bd3e4"></div>
<div style="left:21.5px;top:332.63px;width:348.5px;height:15.590000000000002px;background:#c5e8f2"></div>
<div style="left:171px;top:332.63px;width:1px;height:16.19px;background:rgba(255,255,255,0.0)"></div>
<div style="left:241px;top:332.63px;width:1px;height:16.19px;background:rgba(255,255,255,0.0)"></div>
<div style="left:312.8px;top:332.63px;width:1px;height:16.19px;background:rgba(255,255,255,0.0)"></div>
<div class="t" style="left:-131px;width:300px;text-align:right;top:335.92px;font-size:10.6px;color:#333;font-weight:normal;">Jul 01 2019</div>
<div class="t" style="left:-61px;width:300px;text-align:right;top:335.92px;font-size:10.6px;color:#333;font-weight:normal;">1.13</div>
<div class="t" style="left:10px;width:300px;text-align:right;top:335.92px;font-size:10.6px;color:#333;font-weight:normal;">1.26</div>
<div class="t" style="left:70.5px;width:300px;text-align:right;top:335.92px;font-size:10.6px;color:#333;font-weight:normal;">0</div>
<div style="left:21.5px;top:348.21999999999997px;width:348.5px;height:1px;background:#9bd3e4"></div>
<div style="left:171px;top:348.82000000000005px;width:1px;height:16.19px;background:rgba(255,255,255,0.0)"></div>
<div style="left:241px;top:348.82000000000005px;width:1px;height:16.19px;background:rgba(255,255,255,0.0)"></div>
<div style="left:312.8px;top:348.82000000000005px;width:1px;height:16.19px;background:rgba(255,255,255,0.0)"></div>
<div class="t" style="left:-131px;width:300px;text-align:right;top:352.11px;font-size:10.6px;color:#333;font-weight:normal;">Aug 01 2019</div>
<div class="t" style="left:-61px;width:300px;text-align:right;top:352.11px;font-size:10.6px;color:#333;font-weight:normal;">1.11</div>
<div class="t" style="left:10px;width:300px;text-align:right;top:352.11px;font-size:10.6px;color:#333;font-weight:normal;">1.22</div>
<div class="t" style="left:70.5px;width:300px;text-align:right;top:352.11px;font-size:10.6px;color:#333;font-weight:normal;">0</div>
<div style="left:21.5px;top:364.41px;width:348.5px;height:1px;background:#9bd3e4"></div>
<div style="left:21.5px;top:365.01px;width:348.5px;height:15.590000000000002px;background:#c5e8f2"></div>
<div style="left:171px;top:365.01px;width:1px;height:16.19px;background:rgba(255,255,255,0.0)"></div>
<div style="left:241px;top:365.01px;width:1px;height:16.19px;background:rgba(255,255,255,0.0)"></div>
<div style="left:312.8px;top:365.01px;width:1px;height:16.19px;background:rgba(255,255,255,0.0)"></div>
<div class="t" style="left:-131px;width:300px;text-align:right;top:368.30px;font-size:10.6px;color:#333;font-weight:normal;">Sep 01 2019</div>
<div class="t" style="left:-61px;width:300px;text-align:right;top:368.30px;font-size:10.6px;color:#333;font-weight:normal;">1.10</div>
<div class="t" style="left:10px;width:300px;text-align:right;top:368.30px;font-size:10.6px;color:#333;font-weight:normal;">1.22</div>
<div class="t" style="left:70.5px;width:300px;text-align:right;top:368.30px;font-size:10.6px;color:#333;font-weight:normal;">0</div>
<div style="left:21.5px;top:380.59999999999997px;width:348.5px;height:1px;background:#9bd3e4"></div>
<div style="left:171px;top:381.20000000000005px;width:1px;height:16.19px;background:rgba(255,255,255,0.0)"></div>
<div style="left:241px;top:381.20000000000005px;width:1px;height:16.19px;background:rgba(255,255,255,0.0)"></div>
<div style="left:312.8px;top:381.20000000000005px;width:1px;height:16.19px;background:rgba(255,255,255,0.0)"></div>
<div class="t" style="left:-131px;width:300px;text-align:right;top:384.49px;font-size:10.6px;color:#333;font-weight:normal;">Oct 01 2019</div>
<div class="t" style="left:-61px;width:300px;text-align:right;top:384.49px;font-size:10.6px;color:#333;font-weight:normal;">1.09</div>
<div class="t" style="left:10px;width:300px;text-align:right;top:384.49px;font-size:10.6px;color:#333;font-weight:normal;">1.23</div>
<div class="t" style="left:70.5px;width:300px;text-align:right;top:384.49px;font-size:10.6px;color:#333;font-weight:normal;">0</div>
<div style="left:21.5px;top:396.79px;width:348.5px;height:1px;background:#9bd3e4"></div>
<div style="left:20.5px;top:428.77000000000004px;width:151px;height:18.19px;border:1.6px solid #1e6e43"></div>
<div style="left:168.5px;top:444.46000000000004px;width:4.5px;height:4.5px;background:#1e6e43;border:1px solid #fff"></div>
<div style="left:368px;top:203.5px;width:18px;height:560.5px;background:#e6e6e6"></div>
<div style="left:368px;top:219.3px;width:2px;height:544.7px;background:#d4d4d4"></div>
<div style="left:370.3px;top:204.2px;width:13px;height:13.2px;background:#fff;border:1px solid #c6c6c6"></div>
<svg style="left:373.8px;top:209px" width="7" height="4" viewBox="0 0 7 4"><path d="M0 3.5 L3.5 0 L7 3.5 Z" fill="#555"/></svg>
<div style="left:370.3px;top:218px;width:13px;height:516.3px;background:#fff;border:1px solid #c6c6c6"></div>
<div style="left:370.3px;top:734.3px;width:13px;height:17.5px;background:#dadada"></div>
<div style="left:370.3px;top:751.7px;width:13px;height:12.8px;background:#fff;border:1px solid #c6c6c6"></div>
<svg style="left:373.8px;top:756.5px" width="7" height="4" viewBox="0 0 7 4"><path d="M0 0 L3.5 3.5 L7 0 Z" fill="#555"/></svg>
<div style="left:382.5px;top:26px;width:2.5px;height:776px;background:#c4c4c4"></div>
<div style="left:385px;top:0px;width:1.3px;height:802px;background:#858585"></div>
<div style="left:0px;top:764px;width:382.5px;height:19.4px;background:#ebebeb"></div>
<div style="left:0px;top:764px;width:370px;height:1px;background:#c8c8c8"></div>
<svg style="left:14px;top:769px" width="5" height="8" viewBox="0 0 5 8"><path d="M4 0 V7 L0.5 3.5 Z" fill="#1e6e43"/></svg>
<svg style="left:34.5px;top:769px" width="5" height="8" viewBox="0 0 5 8"><path d="M1 0 V7 L4.5 3.5 Z" fill="#bbb"/></svg>
<div class="t" style="left:51px;top:766.99px;font-size:10.6px;color:#1e6e43;font-weight:bold;">...</div>
<div style="left:65.5px;top:766px;width:1px;height:13px;background:#bbb"></div>
<div class="t" style="left:74.5px;top:767.79px;font-size:10.6px;color:#444;font-weight:normal;">Assumptions</div>
<div style="left:146.5px;top:764px;width:67px;height:17px;background:#fff;border-bottom:2px solid #1e6e43;border-left:1px solid #c8c8c8;border-right:1px solid #c8c8c8"></div>
<div class="t" style="left:153px;top:767.79px;font-size:10.6px;color:#1e6e43;font-weight:bold;">ForexData</div>
<svg style="left:234.5px;top:767px" width="13" height="13" viewBox="0 0 13 13"><circle cx="6.5" cy="6.5" r="5.8" fill="none" stroke="#777" stroke-width="1"/><path d="M6.5 3.2V9.8M3.2 6.5H9.8" stroke="#777"/></svg>
<div style="left:318px;top:768px;width:1.2px;height:1.2px;background:#999"></div>
<div style="left:318px;top:772px;width:1.2px;height:1.2px;background:#999"></div>
<div style="left:318px;top:776px;width:1.2px;height:1.2px;background:#999"></div>
<div style="left:330px;top:767px;width:38.5px;height:13px;background:#fff;border:1px solid #c8c8c8"></div>
<div style="left:342.5px;top:767px;width:1px;height:13px;background:#c8c8c8"></div>
<div style="left:355px;top:767px;width:1px;height:13px;background:#c8c8c8"></div>
<svg style="left:334px;top:770px" width="5" height="8" viewBox="0 0 5 8"><path d="M4 0 V7 L0.5 3.5 Z" fill="#444"/></svg>
<svg style="left:360px;top:770px" width="5" height="8" viewBox="0 0 5 8"><path d="M1 0 V7 L4.5 3.5 Z" fill="#444"/></svg>
<div style="left:0px;top:783.4px;width:382.5px;height:18.6px;background:#f3f2f1"></div>
<svg style="left:6px;top:785px" width="14" height="13" viewBox="0 0 14 13"><rect x="0.5" y="2.5" width="10" height="9" fill="none" stroke="#555"/><path d="M2 5H8M2 7.5H5" stroke="#555"/><circle cx="10" cy="9.5" r="3" fill="#f3f2f1" stroke="#555"/></svg>
<div style="left:123.5px;top:782px;width:33.5px;height:20px;background:#d6d6d6"></div>
<svg style="left:134px;top:786px" width="12" height="12" viewBox="0 0 12 12"><rect x="0.5" y="0.5" width="11" height="11" fill="none" stroke="#333"/><path d="M4.2 0.5V11.5M7.8 0.5V11.5M0.5 4.2H11.5M0.5 7.8H11.5" stroke="#333"/></svg>
<svg style="left:167.5px;top:786px" width="12" height="12" viewBox="0 0 12 12"><rect x="0.5" y="0.5" width="11" height="11" fill="none" stroke="#444"/><rect x="2.5" y="2.5" width="7" height="7" fill="none" stroke="#444"/><path d="M4 5H8M4 7H8" stroke="#444" stroke-width="0.8"/></svg>
<svg style="left:200.5px;top:786px" width="12" height="12" viewBox="0 0 12 12"><rect x="0.5" y="0.5" width="11" height="11" fill="none" stroke="#444"/><path d="M3.5 0.5V6.5H7.5V0.5" fill="none" stroke="#444"/></svg>
<div style="left:229.5px;top:791.5px;width:5px;height:1px;background:#666"></div>
<div style="left:241px;top:792px;width:82.5px;height:1px;background:#b0b0b0"></div>
<div style="left:280.5px;top:787px;width:4px;height:10px;background:#666"></div>
<div style="left:329.5px;top:791.5px;width:6px;height:1px;background:#888"></div>
<div style="left:332px;top:789px;width:1px;height:6px;background:#888"></div>
<div class="t" style="left:347px;top:788.68px;font-size:9.2px;color:#666;font-weight:normal;">100%</div>
<div style="left:386.3px;top:0px;width:1044px;height:802px;background:#f0f0f0"></div>
<div style="left:386.3px;top:0px;width:1.5px;height:802px;background:#e4e4e4"></div>
<div style="left:1428px;top:0px;width:2px;height:802px;background:#2a2a2a"></div>
<div style="left:387.5px;top:0px;width:1040.5px;height:22px;background:#fff"></div>
<svg style="left:390px;top:1px" width="18" height="17" viewBox="0 0 18 17"><rect x="5.5" y="5.3" width="10.3" height="9.4" fill="#fff" stroke="#333" stroke-width="1.1"/><rect x="5.5" y="4.8" width="10.3" height="1.9" fill="#2a80a8"/><path d="M8 9.5H9M11 9.5H12M8 12H9M11 12H12" stroke="#aaa" stroke-width="0.8"/><ellipse cx="7.5" cy="3.3" rx="2.3" ry="2" fill="#e01010" stroke="#600" stroke-width="0.5"/><ellipse cx="4.5" cy="8.3" rx="2.6" ry="1.7" fill="#e8d820" stroke="#333" stroke-width="0.6"/></svg>
<div class="t" style="left:409px;top:5.57px;font-size:9.8px;color:#1a1a1a;font-weight:normal;">Microsoft Visual Basic for Applications - VBA Course Exercises - Working With Arrays.xlsm [break] - [UpdateFOREX (Code)]</div>
<div style="left:1326px;top:9px;width:8.5px;height:1px;background:#111"></div>
<div style="left:1364px;top:5px;width:9.2px;height:9px;border:1px solid #222"></div>
<svg style="left:1404px;top:5px" width="9.5" height="9.5" viewBox="0 0 9.5 9.5"><path d="M0.3 0.3 L9.2 9.2 M9.2 0.3 L0.3 9.2" stroke="#222" stroke-width="0.9"/></svg>
<div style="left:387.5px;top:22px;width:1040.5px;height:42px;background:#f8f8f8"></div>
<div style="left:391.2px;top:25.5px;width:1.2px;height:1.2px;background:#aaa"></div>
<div style="left:391.2px;top:29px;width:1.2px;height:1.2px;background:#aaa"></div>
<div style="left:391.2px;top:32.5px;width:1.2px;height:1.2px;background:#aaa"></div>
<div style="left:391.2px;top:36px;width:1.2px;height:1.2px;background:#aaa"></div>
<svg style="left:394px;top:23px" width="17" height="17" viewBox="0 0 17 17"><path d="M3.5 10.5 L8 10.5 L13 10.5 M8 10.5 L8.5 5 M11.5 6 L8 10.5 L12 14.5" stroke="#2a9a9a" stroke-width="0.9" fill="none"/><ellipse cx="8.5" cy="4.3" rx="1.9" ry="2.3" fill="#c8b830" stroke="#222" stroke-width="0.8"/><ellipse cx="13" cy="5" rx="1.9" ry="2.3" fill="#d020d0" stroke="#222" stroke-width="0.8"/><ellipse cx="3.3" cy="10.3" rx="2.2" ry="2.3" fill="#b020b0" stroke="#222" stroke-width="0.8"/><ellipse cx="8" cy="10.8" rx="2.3" ry="1.8" fill="#20b820" stroke="#124" stroke-width="0.6"/><ellipse cx="13" cy="10.8" rx="2.4" ry="1.8" fill="#30d0e8" stroke="#124" stroke-width="0.6"/><ellipse cx="12.3" cy="14.6" rx="2.3" ry="1.5" fill="#e0c830" stroke="#222" stroke-width="0.8"/></svg>
<div class="t" style="left:415.2px;top:28.87px;font-size:9.8px;color:#1a1a1a;font-weight:normal;text-decoration-thickness:1px;text-underline-offset:1px"><u>F</u>ile</div>
<div class="t" style="left:440.1px;top:28.87px;font-size:9.8px;color:#1a1a1a;font-weight:normal;text-decoration-thickness:1px;text-underline-offset:1px"><u>E</u>dit</div>
<div class="t" style="left:466.7px;top:28.87px;font-size:9.8px;color:#1a1a1a;font-weight:normal;text-decoration-thickness:1px;text-underline-offset:1px"><u>V</u>iew</div>
<div class="t" style="left:497.4px;top:28.87px;font-size:9.8px;color:#1a1a1a;font-weight:normal;text-decoration-thickness:1px;text-underline-offset:1px"><u>I</u>nsert</div>
<div class="t" style="left:532.4px;top:28.87px;font-size:9.8px;color:#1a1a1a;font-weight:normal;text-decoration-thickness:1px;text-underline-offset:1px">F<u>o</u>rmat</div>
<div class="t" style="left:574.1px;top:28.87px;font-size:9.8px;color:#1a1a1a;font-weight:normal;text-decoration-thickness:1px;text-underline-offset:1px"><u>D</u>ebug</div>
<div class="t" style="left:614.4px;top:28.87px;font-size:9.8px;color:#1a1a1a;font-weight:normal;text-decoration-thickness:1px;text-underline-offset:1px"><u>R</u>un</div>
<div class="t" style="left:641.8px;top:28.87px;font-size:9.8px;color:#1a1a1a;font-weight:normal;text-decoration-thickness:1px;text-underline-offset:1px"><u>T</u>ools</div>
<div class="t" style="left:675.9px;top:28.87px;font-size:9.8px;color:#1a1a1a;font-weight:normal;text-decoration-thickness:1px;text-underline-offset:1px"><u>A</u>dd-Ins</div>
<div class="t" style="left:721.2px;top:28.87px;font-size:9.8px;color:#1a1a1a;font-weight:normal;text-decoration-thickness:1px;text-underline-offset:1px"><u>W</u>indow</div>
<div class="t" style="left:767.7px;top:28.87px;font-size:9.8px;color:#1a1a1a;font-weight:normal;text-decoration-thickness:1px;text-underline-offset:1px"><u>H</u>elp</div>
<div style="left:1384px;top:33.5px;width:5px;height:1.6px;background:#111"></div>
<svg style="left:1398px;top:28px" width="7.5" height="7.5" viewBox="0 0 7.5 7.5"><rect x="2.6" y="0.6" width="4.3" height="4" fill="none" stroke="#111" stroke-width="1.2"/><rect x="0.6" y="2.9" width="4.3" height="4" fill="#f8f8f8" stroke="#111" stroke-width="1.2"/></svg>
<svg style="left:1415.3px;top:28.5px" width="7" height="6.5" viewBox="0 0 7 6.5"><path d="M0.6 0.6 L6.4 5.9 M6.4 0.6 L0.6 5.9" stroke="#111" stroke-width="1.5"/></svg>
<div style="left:389px;top:43.5px;width:539px;height:20px;background:#efefef"></div>
<div style="left:391px;top:47px;width:1px;height:1px;background:#999"></div>
<div style="left:391px;top:50px;width:1px;height:1px;background:#999"></div>
<div style="left:391px;top:53px;width:1px;height:1px;background:#999"></div>
<div style="left:391px;top:56px;width:1px;height:1px;background:#999"></div>
<div style="left:391px;top:59px;width:1px;height:1px;background:#999"></div>
<div style="left:927px;top:43px;width:11px;height:20px;border-radius:3px;background:linear-gradient(90deg,#c8c8c8,#a8a8a8)"></div>
<div style="left:929.5px;top:56px;width:6px;height:1px;background:#222"></div>
<svg style="left:929.5px;top:58px" width="6" height="3" viewBox="0 0 6 3"><path d="M0 0 H6 L3 3 Z" fill="#111"/></svg>
<svg style="left:396px;top:46px" width="14" height="13.5" viewBox="0 0 14 13.5"><rect x="0.7" y="0.7" width="12.6" height="12.1" fill="#2a8a3a" stroke="#1a6a2a" stroke-width="1.4" stroke-dasharray="1.2 0.6"/><rect x="2.2" y="2.2" width="9.6" height="8.6" fill="#fff"/><path d="M3 3 L11 10.5 M11 3 L3 10.5" stroke="#1e7a30" stroke-width="2.6"/><rect x="2.5" y="10" width="9" height="1.5" fill="#eaf5ea"/></svg>
<svg style="left:415.5px;top:46.5px" width="13" height="12.5" viewBox="0 0 13 12.5"><rect x="0.5" y="0.5" width="12" height="11.5" fill="#fafafa" stroke="#555" stroke-width="1"/><rect x="0.5" y="0.5" width="12" height="2" fill="#444"/><rect x="6.5" y="3" width="5.5" height="8.5" fill="#e0a850"/><path d="M2 4.5H5M2 7H5" stroke="#888" stroke-width="1"/></svg>
<svg style="left:432.5px;top:50.5px" width="7" height="4" viewBox="0 0 7 4"><path d="M0 0 H7 L3.5 3.8 Z" fill="#111"/></svg>
<svg style="left:444.5px;top:46.5px" width="12.5" height="12.5" viewBox="0 0 12.5 12.5"><rect x="0.5" y="0.5" width="11.5" height="11.5" rx="1" fill="#4a5ad0" stroke="#3a40a0" stroke-width="0.8"/><rect x="3" y="0.8" width="6.5" height="5" fill="#f4f6ff"/><rect x="3.5" y="8" width="5.5" height="4" fill="#1a2060"/><rect x="6.5" y="9" width="1.5" height="2" fill="#8a90d0"/></svg>
<div style="left:462px;top:47px;width:1px;height:12px;background:#d8d8d8"></div>
<svg style="left:468px;top:46px" width="10" height="12.5" viewBox="0 0 10 12.5"><path d="M2.5 0.5 L6.5 8 M7.5 0.5 L3.5 8" stroke="#bdbdbd" stroke-width="1.2"/><circle cx="2.8" cy="10" r="2" fill="none" stroke="#c4c4c4" stroke-width="1.1"/><circle cx="7.2" cy="10" r="2" fill="none" stroke="#c4c4c4" stroke-width="1.1"/></svg>
<svg style="left:485.5px;top:46.5px" width="12.5" height="12.5" viewBox="0 0 12.5 12.5"><rect x="0.5" y="0.5" width="6.5" height="8" fill="#f2f2f2" stroke="#cfcfcf"/><path d="M2 3H5.5M2 5H5.5" stroke="#d0d0d0"/><rect x="5" y="4" width="7" height="8" fill="#f2f2f2" stroke="#cfcfcf"/></svg>
<svg style="left:505px;top:46px" width="13" height="13" viewBox="0 0 13 13"><rect x="0.5" y="2" width="9" height="10.5" fill="#e8b020" stroke="#8a6a10" stroke-width="0.8"/><rect x="3" y="0.5" width="4" height="2.5" fill="#fff" stroke="#666" stroke-width="0.8"/><rect x="5.5" y="6.5" width="7" height="6" fill="#fff" stroke="#333" stroke-width="1"/><path d="M7 9H11" stroke="#4a70c0" stroke-width="1.2"/></svg>
<svg style="left:523.5px;top:46px" width="13" height="13" viewBox="0 0 13 13"><rect x="1" y="1" width="3.5" height="4" fill="#2a4a9a"/><rect x="8.5" y="1" width="3.5" height="4" fill="#2a4a9a"/><rect x="0.5" y="5" width="5" height="7.5" rx="1" fill="#3a60c0" stroke="#1a3080" stroke-width="0.7"/><rect x="7.5" y="5" width="5" height="7.5" rx="1" fill="#3a60c0" stroke="#1a3080" stroke-width="0.7"/><rect x="5" y="5.5" width="3" height="3" fill="#1a3080"/><rect x="1.8" y="8.5" width="2" height="3" fill="#e8eefa"/><rect x="8.8" y="8.5" width="2" height="3" fill="#e8eefa"/></svg>
<div style="left:541.4px;top:47px;width:1px;height:12px;background:#d0d0d0"></div>
<svg style="left:546.5px;top:47px" width="12" height="11" viewBox="0 0 12 11"><path d="M2 1 L1.2 6.5 L6.5 5.2 L4.6 3.8 Q7.5 2.5 9.2 4.6 Q10.8 7.2 7.5 10.2 L9 10.8 Q12.5 7.5 10.8 3.8 Q8.5 0 3.6 2.5 Z" fill="#2f70d8"/></svg>
<svg style="left:565.5px;top:47px" width="11" height="11" viewBox="0 0 11 11"><path d="M9 1 L9.8 6.5 L4.5 5.2 L6.4 3.8 Q3.5 2.5 1.8 4.6 Q0.2 7.2 3.5 10.2 L2 10.8 Q-1.5 7.5 0.2 3.8 Q2.5 0 7.4 2.5 Z" fill="#cfcfcf"/></svg>
<div style="left:582.3px;top:47px;width:1px;height:12px;background:#d0d0d0"></div>
<svg style="left:590.5px;top:49px" width="6" height="8" viewBox="0 0 6 8"><path d="M0 0 L6 4 L0 8 Z" fill="#1e9a28"/></svg>
<svg style="left:608.5px;top:49.5px" width="8" height="7.5" viewBox="0 0 8 7.5"><rect x="0.5" y="0" width="2.5" height="7.5" fill="#d4d4d4"/><rect x="5" y="0" width="2.5" height="7.5" fill="#d4d4d4"/></svg>
<svg style="left:627.5px;top:49.5px" width="8" height="8" viewBox="0 0 8 8"><rect x="0.3" y="0.3" width="7.4" height="7.4" fill="#3a6ad8" stroke="#2a4aa0" stroke-width="0.6"/><rect x="1.5" y="1.5" width="3" height="3" fill="#7aa0f0"/></svg>
<svg style="left:643.5px;top:45.5px" width="14.5" height="13.5" viewBox="0 0 14.5 13.5"><path d="M0.5 0.5 V11 H8 Z" fill="#2a60d0"/><path d="M2 5 V9.5 H5.5 Z" fill="#9ac0f8"/><rect x="0" y="10.5" width="14.5" height="3" fill="#e0a020" stroke="#8a6010" stroke-width="0.5"/><path d="M5 9.5 L12 2 L14 3.8 L7 11 L4.5 11.5 Z" fill="#f0c040" stroke="#805010" stroke-width="0.6"/><path d="M12 2 L13 1 L14.8 2.8 L14 3.8 Z" fill="#e05040"/></svg>
<div style="left:661.8px;top:47px;width:1px;height:12px;background:#d0d0d0"></div>
<svg style="left:666.5px;top:46px" width="14" height="13" viewBox="0 0 14 13"><rect x="0.5" y="0.5" width="8" height="8" fill="#5a8ae0" stroke="#234a90" stroke-width="0.8"/><path d="M2 10 L7 7.5 L12.5 10 L7 12.5 Z" fill="#e8eef8" stroke="#234" stroke-width="0.8"/><circle cx="11.5" cy="2" r="1.5" fill="#e09030"/><circle cx="11" cy="6.5" r="1.5" fill="#d04040"/><circle cx="12" cy="11.5" r="1.3" fill="#e09030"/><path d="M2 3 H6 M2 5 H6" stroke="#fff" stroke-width="0.8"/></svg>
<svg style="left:685px;top:46px" width="14" height="13" viewBox="0 0 14 13"><rect x="0.5" y="5" width="10" height="7.5" fill="#eef2f8" stroke="#556" stroke-width="0.8"/><path d="M1.5 8H9.5M1.5 10.5H9.5M5 5V12.5" stroke="#6a8ac8" stroke-width="0.8"/><path d="M2 5 Q6 0 12 1.5 L11 5 Z" fill="#e0b030" stroke="#805010" stroke-width="0.6"/><path d="M11 1 L14 2.5 L12.5 5.5 Z" fill="#20a040"/></svg>
<svg style="left:704.5px;top:46px" width="13.5" height="13" viewBox="0 0 13.5 13"><path d="M1 6 H12.5 L11 12.5 H2.5 Z" fill="#e8c040" stroke="#8a6a10" stroke-width="0.7"/><circle cx="2.5" cy="2" r="1.8" fill="#2a50c0"/><path d="M5 4.5 L8 2.5 L8 6 Z" fill="#20a040"/><rect x="9.5" y="0" width="3.5" height="3.5" fill="#d03030"/><path d="M3 6 L6 9 L9 6" fill="#f8e080"/></svg>
<svg style="left:725.5px;top:46.5px" width="11" height="11" viewBox="0 0 11 11"><path d="M1 1 L10 10 M10 1 L1 10" stroke="#cfcfcf" stroke-width="1.8"/><path d="M0 3 L3 0 M8 0 L11 3" stroke="#cfcfcf" stroke-width="2"/></svg>
<div style="left:741.5px;top:47px;width:1px;height:12px;background:#d0d0d0"></div>
<svg style="left:745.5px;top:45.5px" width="13.5" height="13.5" viewBox="0 0 13.5 13.5"><circle cx="6.75" cy="6.75" r="6.4" fill="#2f68c8" stroke="#1a4a98" stroke-width="0.6"/><circle cx="6" cy="5" r="4" fill="#4a88e0" opacity="0.6"/><text x="6.8" y="10.8" font-size="10.5" font-weight="bold" text-anchor="middle" fill="#fff" font-family="Liberation Sans">?</text></svg>
<div style="left:763.2px;top:47px;width:1px;height:12px;background:#d0d0d0"></div>
<div class="t" style="left:767.5px;top:49.66px;font-size:9.7px;color:#1a1a1a;font-weight:normal;">Ln 112, Col 51</div>
<div style="left:388px;top:64px;width:180px;height:18px;background:#bccbdb"></div>
<div class="t" style="left:388px;top:66.81px;font-size:9.4px;color:#222;font-weight:normal;">Project - VBAProject</div>
<div style="left:568px;top:64px;width:17px;height:18px;background:#fbfbfb;border:1px solid #8a8a8a;border-top-color:#fff;border-left-color:#fff"></div>
<svg style="left:571px;top:67px" width="11" height="11" viewBox="0 0 11 11"><path d="M1 1 L10 10 M10 1 L1 10" stroke="#000" stroke-width="1.9"/></svg>
<div style="left:388px;top:82px;width:197px;height:22px;background:#f8f8f8"></div>
<svg style="left:393px;top:87.5px" width="12" height="10.5" viewBox="0 0 12 10.5"><rect x="0.5" y="0.5" width="11" height="9.5" fill="#f0f4fa" stroke="#3a5a98" stroke-width="1"/><rect x="0.5" y="0.5" width="11" height="1.8" fill="#3a70d0"/><path d="M3 4H6M7.5 4H9M3 6.5H5M7 6.5H9M3 8.5H5M7 8.5H9" stroke="#e05040" stroke-width="1"/><path d="M2 3V9.5" stroke="#8aa0c8" stroke-width="0.8"/></svg>
<svg style="left:411.5px;top:87px" width="12.5" height="11" viewBox="0 0 12.5 11"><rect x="0.5" y="0.5" width="11.5" height="10" fill="#ececec" stroke="#d0d0d0" stroke-width="1"/><path d="M2 4H5M7 3H10.5M2 8H5M7 8H10.5" stroke="#fff" stroke-width="1.5"/></svg>
<div style="left:431px;top:84px;width:19px;height:19px;background:#dcebf8;border:1px solid #5a90b8"></div>
<svg style="left:434px;top:87.5px" width="13" height="11" viewBox="0 0 13 11"><path d="M0.5 1 H4.5 L5.8 2.5 H12.2 V10.5 H0.5 Z" fill="#e8c050" stroke="#8a7020" stroke-width="0.6"/><rect x="0.5" y="3" width="11.7" height="7.5" fill="#f0c840"/><path d="M0.5 10.5 H12.2 V3" fill="none" stroke="#6a5010" stroke-width="0.8"/></svg>
<div style="left:572px;top:84px;width:12px;height:20px;border-radius:3px;background:linear-gradient(90deg,#c8c8c8,#a0a0a0)"></div>
<div style="left:575px;top:96px;width:6px;height:1px;background:#222"></div>
<svg style="left:575px;top:98px" width="6" height="3" viewBox="0 0 6 3"><path d="M0 0 H6 L3 3 Z" fill="#111"/></svg>
<div style="left:388px;top:104px;width:197px;height:208px;background:#fff"></div>
<div style="left:388px;top:103.5px;width:197px;height:1px;background:#c8c8c8"></div>
<div style="left:396px;top:113px;width:8px;height:1px;background:#cfcfcf"></div>
<div style="left:396px;top:126.4px;width:8px;height:1px;background:#cfcfcf"></div>
<div style="left:395.5px;top:117.5px;width:1px;height:5px;background:#cfcfcf"></div>
<div style="left:411px;top:143.5px;width:1px;height:59px;background:#cfcfcf"></div>
<div style="left:411px;top:144px;width:1px;height:90px;background:#cfcfcf"></div>
<div style="left:426.5px;top:147px;width:1px;height:46.5px;background:#cfcfcf"></div>
<div style="left:427px;top:153px;width:8px;height:1px;background:#cfcfcf"></div>
<div style="left:427px;top:166.3px;width:8px;height:1px;background:#cfcfcf"></div>
<div style="left:427px;top:179.6px;width:8px;height:1px;background:#cfcfcf"></div>
<div style="left:427px;top:193px;width:8px;height:1px;background:#cfcfcf"></div>
<div style="left:426.5px;top:213.5px;width:1px;height:20px;background:#cfcfcf"></div>
<div style="left:427px;top:219.6px;width:8px;height:1px;background:#cfcfcf"></div>
<div style="left:427px;top:233px;width:8px;height:1px;background:#cfcfcf"></div>
<svg style="left:392px;top:109.5px" width="9" height="9" viewBox="0 0 9 9"><rect x="0.5" y="0.5" width="7.5" height="7" fill="#f4f4f8" stroke="#c4c4cc"/><path d="M2 4H6.5" stroke="#556"/><path d="M4.25 1.8V6.3" stroke="#556"/></svg>
<svg style="left:392px;top:122.8px" width="9" height="9" viewBox="0 0 9 9"><rect x="0.5" y="0.5" width="7.5" height="7" fill="#f4f4f8" stroke="#c4c4cc"/><path d="M2 4H6.5" stroke="#556"/></svg>
<svg style="left:407.3px;top:136.2px" width="9" height="9" viewBox="0 0 9 9"><rect x="0.5" y="0.5" width="7.5" height="7" fill="#f4f4f8" stroke="#c4c4cc"/><path d="M2 4H6.5" stroke="#556"/></svg>
<svg style="left:407.3px;top:202.8px" width="9" height="9" viewBox="0 0 9 9"><rect x="0.5" y="0.5" width="7.5" height="7" fill="#f4f4f8" stroke="#c4c4cc"/><path d="M2 4H6.5" stroke="#556"/></svg>
<svg style="left:404.2px;top:106px" width="14" height="13" viewBox="0 0 14 13"><path d="M0.8 9 L6 12.3 L12.8 9.5 L7.5 6.5 Z" fill="#fff" stroke="#000" stroke-width="1.3"/><path d="M1.5 0.8 L4.5 0.5 L6 6 L3 7.2 Z" fill="#1a7080" stroke="#000" stroke-width="0.8"/><path d="M4.5 5.5 L8.5 4.5 L10.5 8.5 L6.5 9.8 Z" fill="#50d0e8" stroke="#0a5060" stroke-width="0.6"/><circle cx="10" cy="5.5" r="1.5" fill="#9030a8" stroke="#000" stroke-width="0.7"/><path d="M7.5 4.5 L10.5 1.5" stroke="#000" stroke-width="1.3"/><path d="M8.2 3.8 L9.5 2.5" stroke="#a8a060" stroke-width="1"/><ellipse cx="11.8" cy="1.3" rx="1.8" ry="1.2" fill="#20c020" stroke="#000" stroke-width="0.5"/></svg>
<svg style="left:404.2px;top:119.4px" width="14" height="13" viewBox="0 0 14 13"><path d="M0.8 9 L6 12.3 L12.8 9.5 L7.5 6.5 Z" fill="#fff" stroke="#000" stroke-width="1.3"/><path d="M1.5 0.8 L4.5 0.5 L6 6 L3 7.2 Z" fill="#1a7080" stroke="#000" stroke-width="0.8"/><path d="M4.5 5.5 L8.5 4.5 L10.5 8.5 L6.5 9.8 Z" fill="#50d0e8" stroke="#0a5060" stroke-width="0.6"/><circle cx="10" cy="5.5" r="1.5" fill="#9030a8" stroke="#000" stroke-width="0.7"/><path d="M7.5 4.5 L10.5 1.5" stroke="#000" stroke-width="1.3"/><path d="M8.2 3.8 L9.5 2.5" stroke="#a8a060" stroke-width="1"/><ellipse cx="11.8" cy="1.3" rx="1.8" ry="1.2" fill="#20c020" stroke="#000" stroke-width="0.5"/></svg>
<div class="t" style="left:420px;top:109.34px;font-size:9.6px;color:#111;font-weight:bold;width:165px;overflow:hidden">VBAProject (ForexAssumptions.xlsx)</div>
<div class="t" style="left:420px;top:122.74px;font-size:9.6px;color:#111;font-weight:bold;width:165px;overflow:hidden">VBAProject (VBA Course Exercises - Working With Arrays.xlsm)</div>
<div style="left:585px;top:104px;width:3px;height:208px;background:#f0f0f0"></div>
<svg style="left:419px;top:134px" width="16" height="13" viewBox="0 0 16 13"><path d="M0.5 2 H5 L6.5 3.5 H13.5 V11.5 H0.5 Z" fill="#f0d070" stroke="#8a7020" stroke-width="0.8"/><path d="M2 5 H15 L13.5 11.5 H0.5 Z" fill="#f8e8a0" stroke="#8a7020" stroke-width="0.8"/></svg>
<svg style="left:419px;top:200.5px" width="16" height="13" viewBox="0 0 16 13"><path d="M0.5 2 H5 L6.5 3.5 H13.5 V11.5 H0.5 Z" fill="#f0d070" stroke="#8a7020" stroke-width="0.8"/><path d="M2 5 H15 L13.5 11.5 H0.5 Z" fill="#f8e8a0" stroke="#8a7020" stroke-width="0.8"/></svg>
<div class="t" style="left:435.5px;top:136.68px;font-size:8.85px;color:#222;font-weight:normal;">Microsoft Excel Objects</div>
<div class="t" style="left:435.5px;top:203.28px;font-size:8.85px;color:#222;font-weight:normal;">Modules</div>
<svg style="left:435px;top:146.5px" width="14" height="14" viewBox="0 0 14 14"><path d="M4 0.5 H10 L12.5 3 V12.5 H4 Z" fill="#fff" stroke="#111" stroke-width="1"/><path d="M10 0.5 V3 H12.5" fill="none" stroke="#111" stroke-width="0.8"/><rect x="0.5" y="2.5" width="8.5" height="8.5" fill="#111"/><path d="M1.3 5H8.3M1.3 7.1H8.3M1.3 9.2H8.3M4.3 3.3V10.3" stroke="#fff" stroke-width="0.6"/></svg>
<div class="t" style="left:450.5px;top:149.78px;font-size:8.85px;color:#222;font-weight:normal;">Sheet2 (Cover Page)</div>
<svg style="left:435px;top:173.1px" width="14" height="14" viewBox="0 0 14 14"><path d="M4 0.5 H10 L12.5 3 V12.5 H4 Z" fill="#fff" stroke="#111" stroke-width="1"/><path d="M10 0.5 V3 H12.5" fill="none" stroke="#111" stroke-width="0.8"/><rect x="0.5" y="2.5" width="8.5" height="8.5" fill="#111"/><path d="M1.3 5H8.3M1.3 7.1H8.3M1.3 9.2H8.3M4.3 3.3V10.3" stroke="#fff" stroke-width="0.6"/></svg>
<div class="t" style="left:450.5px;top:176.38px;font-size:8.85px;color:#222;font-weight:normal;">ws_Assumptions (Assumptions)</div>
<svg style="left:435px;top:186.5px" width="14" height="14" viewBox="0 0 14 14"><path d="M4 0.5 H10 L12.5 3 V12.5 H4 Z" fill="#fff" stroke="#111" stroke-width="1"/><path d="M10 0.5 V3 H12.5" fill="none" stroke="#111" stroke-width="0.8"/><rect x="0.5" y="2.5" width="8.5" height="8.5" fill="#111"/><path d="M1.3 5H8.3M1.3 7.1H8.3M1.3 9.2H8.3M4.3 3.3V10.3" stroke="#fff" stroke-width="0.6"/></svg>
<div class="t" style="left:450.5px;top:189.78px;font-size:8.85px;color:#222;font-weight:normal;">ws_ForexData (ForexData)</div>
<svg style="left:435px;top:160px" width="14" height="14" viewBox="0 0 14 14"><path d="M3.5 0.5 H9.5 L12.5 3.5 V12.5 H3.5 Z" fill="#fff" stroke="#111"/><path d="M0.5 4 L6.5 11 M6.5 4 L0.5 11" stroke="#1e8a3a" stroke-width="2"/></svg>
<div class="t" style="left:450.5px;top:163.08px;font-size:8.85px;color:#222;font-weight:normal;">ThisWorkbook</div>
<svg style="left:434px;top:214px" width="14" height="11" viewBox="0 0 14 11"><ellipse cx="7" cy="2.5" rx="2" ry="2" fill="#b8b060" stroke="#000" stroke-width="0.7"/><ellipse cx="11.5" cy="3" rx="1.6" ry="2.2" fill="#c020c0" stroke="#000" stroke-width="0.7"/><ellipse cx="2.5" cy="7.5" rx="2" ry="2" fill="#8a208a" stroke="#000" stroke-width="0.7"/><ellipse cx="6.5" cy="7.5" rx="2.2" ry="1.6" fill="#20a020" stroke="#000" stroke-width="0.7"/><ellipse cx="11" cy="9" rx="2" ry="1.5" fill="#30a0b0" stroke="#000" stroke-width="0.7"/><path d="M8.5 5 L9.5 6.5" stroke="#999" stroke-width="0.8"/></svg>
<svg style="left:434px;top:227.3px" width="14" height="11" viewBox="0 0 14 11"><ellipse cx="7" cy="2.5" rx="2" ry="2" fill="#b8b060" stroke="#000" stroke-width="0.7"/><ellipse cx="11.5" cy="3" rx="1.6" ry="2.2" fill="#c020c0" stroke="#000" stroke-width="0.7"/><ellipse cx="2.5" cy="7.5" rx="2" ry="2" fill="#8a208a" stroke="#000" stroke-width="0.7"/><ellipse cx="6.5" cy="7.5" rx="2.2" ry="1.6" fill="#20a020" stroke="#000" stroke-width="0.7"/><ellipse cx="11" cy="9" rx="2" ry="1.5" fill="#30a0b0" stroke="#000" stroke-width="0.7"/><path d="M8.5 5 L9.5 6.5" stroke="#999" stroke-width="0.8"/></svg>
<div class="t" style="left:450.5px;top:216.48px;font-size:8.85px;color:#222;font-weight:normal;">Functions</div>
<div style="left:449px;top:226.5px;width:57px;height:14px;background:#eeeeee"></div>
<div class="t" style="left:450.5px;top:229.78px;font-size:8.85px;color:#222;font-weight:normal;">UpdateFOREX</div>
<div style="left:388px;top:312px;width:197px;height:14px;background:#f0f0f0"></div>
<svg style="left:392px;top:314.5px" width="5" height="9" viewBox="0 0 5 9"><path d="M4.5 0.7 L0.8 4.5 L4.5 8.3" fill="none" stroke="#555" stroke-width="1.2"/></svg>
<div style="left:402px;top:313px;width:111px;height:12px;background:#cdcdcd"></div>
<svg style="left:574px;top:314.5px" width="5" height="9" viewBox="0 0 5 9"><path d="M0.5 0.7 L4.2 4.5 L0.5 8.3" fill="none" stroke="#555" stroke-width="1.2"/></svg>
<div style="left:387px;top:331px;width:181px;height:18px;background:#bccbdb"></div>
<div class="t" style="left:388px;top:334.21px;font-size:9.4px;color:#222;font-weight:normal;">Locals</div>
<div style="left:568px;top:331px;width:17px;height:18px;background:#fbfbfb;border:1px solid #8a8a8a;border-top-color:#fff;border-left-color:#fff"></div>
<svg style="left:571px;top:334px" width="11" height="11" viewBox="0 0 11 11"><path d="M1 1 L10 10 M10 1 L1 10" stroke="#000" stroke-width="1.9"/></svg>
<div style="left:387px;top:351.5px;width:182.5px;height:15px;background:#fff;border:1px solid #aaa;border-top-color:#888"></div>
<div class="t" style="left:390px;top:355.29px;font-size:8.6px;color:#222;font-weight:normal;">VBAProject.UpdateFOREX.UpdateForexHistor</div>
<div style="left:571px;top:351.5px;width:14px;height:15px;background:#f0f0f0;border:1px solid #aaa"></div>
<div class="t" style="left:573px;top:354.85px;font-size:9px;color:#222;font-weight:normal;">...</div>
<div style="left:387px;top:368.5px;width:198px;height:290px;background:#fff;border-top:1px solid #888;border-left:1px solid #888"></div>
<div style="left:388px;top:369.5px;width:182px;height:12px;background:#f0f0f0;border-bottom:1.5px solid #9a9a9a"></div>
<div style="left:448px;top:369.5px;width:1.5px;height:12px;background:#9a9a9a"></div>
<div style="left:509px;top:369.5px;width:1.5px;height:12px;background:#9a9a9a"></div>
<div class="t" style="left:390px;top:372.04px;font-size:8.9px;color:#222;font-weight:normal;">Expression</div>
<div class="t" style="left:451px;top:372.04px;font-size:8.9px;color:#222;font-weight:normal;">Value</div>
<div class="t" style="left:512px;top:372.04px;font-size:8.9px;color:#222;font-weight:normal;">Type</div>
<div style="left:570px;top:369.5px;width:15px;height:289px;background:#f0f0f0"></div>
<svg style="left:573px;top:374.5px" width="9" height="5" viewBox="0 0 9 5"><path d="M0.7 4.5 L4.5 0.8 L8.3 4.5" fill="none" stroke="#555" stroke-width="1.2"/></svg>
<div style="left:571px;top:384px;width:13px;height:261px;background:#cdcdcd"></div>
<svg style="left:573px;top:649px" width="9" height="5" viewBox="0 0 9 5"><path d="M0.7 0.5 L4.5 4.2 L8.3 0.5" fill="none" stroke="#555" stroke-width="1.2"/></svg>
<svg style="left:389.5px;top:382.8px" width="9" height="9" viewBox="0 0 9 9"><rect x="0.5" y="0.5" width="8" height="8" fill="#fff" stroke="#333" stroke-width="0.9"/><path d="M2 4.5H7M4.5 2V7" stroke="#222"/></svg>
<div class="clip" style="left:400px;top:380.3px;width:48px;height:12px">
<div class="t" style="left:0.6px;top:2.65px;font-size:8.65px;color:#222">UpdateFOR</div></div>
<div class="clip" style="left:449.5px;top:380.3px;width:59.5px;height:12px">
<div class="t" style="left:0.5px;top:2.65px;font-size:8.65px;color:#222"></div></div>
<div class="clip" style="left:510px;top:380.3px;width:60px;height:12px">
<div class="t" style="left:0;top:2.65px;font-size:8.65px;color:#222">UpdateFOREX.</div></div>
<svg style="left:389.5px;top:393.91px" width="9" height="9" viewBox="0 0 9 9"><rect x="0.5" y="0.5" width="8" height="8" fill="#fff" stroke="#333" stroke-width="0.9"/><path d="M2 4.5H7M4.5 2V7" stroke="#222"/></svg>
<div class="clip" style="left:400px;top:391.41px;width:48px;height:12px">
<div class="t" style="left:0.6px;top:2.65px;font-size:8.65px;color:#222">ThisWB</div></div>
<div class="clip" style="left:449.5px;top:391.41px;width:59.5px;height:12px">
<div class="t" style="left:0.5px;top:2.65px;font-size:8.65px;color:#222"></div></div>
<div class="clip" style="left:510px;top:391.41px;width:60px;height:12px">
<div class="t" style="left:0;top:2.65px;font-size:8.65px;color:#222">Workbook/This&#x27;</div></div>
<svg style="left:389.5px;top:405.02px" width="9" height="9" viewBox="0 0 9 9"><rect x="0.5" y="0.5" width="8" height="8" fill="#fff" stroke="#333" stroke-width="0.9"/><path d="M2 4.5H7M4.5 2V7" stroke="#222"/></svg>
<div class="clip" style="left:400px;top:402.52px;width:48px;height:12px">
<div class="t" style="left:0.6px;top:2.65px;font-size:8.65px;color:#222">WB_assump</div></div>
<div class="clip" style="left:449.5px;top:402.52px;width:59.5px;height:12px">
<div class="t" style="left:0.5px;top:2.65px;font-size:8.65px;color:#222"></div></div>
<div class="clip" style="left:510px;top:402.52px;width:60px;height:12px">
<div class="t" style="left:0;top:2.65px;font-size:8.65px;color:#222">Workbook/Worl</div></div>
<div class="clip" style="left:400px;top:413.63px;width:48px;height:12px">
<div class="t" style="left:0.6px;top:2.65px;font-size:8.65px;color:#222">FilePath</div></div>
<div class="clip" style="left:449.5px;top:413.63px;width:59.5px;height:12px">
<div class="t" style="left:0.5px;top:2.65px;font-size:8.65px;color:#222">&quot;C:\Users\CFN\</div></div>
<div class="clip" style="left:510px;top:413.63px;width:60px;height:12px">
<div class="t" style="left:0;top:2.65px;font-size:8.65px;color:#222">String</div></div>
<div class="clip" style="left:400px;top:424.74px;width:48px;height:12px">
<div class="t" style="left:0.6px;top:2.65px;font-size:8.65px;color:#222">FileName</div></div>
<div class="clip" style="left:449.5px;top:424.74px;width:59.5px;height:12px">
<div class="t" style="left:0.5px;top:2.65px;font-size:8.65px;color:#222">&quot;ForexAssumpt</div></div>
<div class="clip" style="left:510px;top:424.74px;width:60px;height:12px">
<div class="t" style="left:0;top:2.65px;font-size:8.65px;color:#222">String</div></div>
<div class="clip" style="left:400px;top:435.85px;width:48px;height:12px">
<div class="t" style="left:0.6px;top:2.65px;font-size:8.65px;color:#222">RangeName</div></div>
<div class="clip" style="left:449.5px;top:435.85px;width:59.5px;height:12px">
<div class="t" style="left:0.5px;top:2.65px;font-size:8.65px;color:#222">&quot;&quot;</div></div>
<div class="clip" style="left:510px;top:435.85px;width:60px;height:12px">
<div class="t" style="left:0;top:2.65px;font-size:8.65px;color:#222">String</div></div>
<div class="clip" style="left:400px;top:446.96000000000004px;width:48px;height:12px">
<div class="t" style="left:0.6px;top:2.65px;font-size:8.65px;color:#222">SourceRow(</div></div>
<div class="clip" style="left:449.5px;top:446.96000000000004px;width:59.5px;height:12px">
<div class="t" style="left:0.5px;top:2.65px;font-size:8.65px;color:#222">11</div></div>
<div class="clip" style="left:510px;top:446.96000000000004px;width:60px;height:12px">
<div class="t" style="left:0;top:2.65px;font-size:8.65px;color:#222">Integer</div></div>
<div class="clip" style="left:400px;top:458.07px;width:48px;height:12px">
<div class="t" style="left:0.6px;top:2.65px;font-size:8.65px;color:#222">SourceColC</div></div>
<div class="clip" style="left:449.5px;top:458.07px;width:59.5px;height:12px">
<div class="t" style="left:0.5px;top:2.65px;font-size:8.65px;color:#222">5</div></div>
<div class="clip" style="left:510px;top:458.07px;width:60px;height:12px">
<div class="t" style="left:0;top:2.65px;font-size:8.65px;color:#222">Integer</div></div>
<div class="clip" style="left:400px;top:469.18px;width:48px;height:12px">
<div class="t" style="left:0.6px;top:2.65px;font-size:8.65px;color:#222">NewTableR</div></div>
<div class="clip" style="left:449.5px;top:469.18px;width:59.5px;height:12px">
<div class="t" style="left:0.5px;top:2.65px;font-size:8.65px;color:#222">Nothing</div></div>
<div class="clip" style="left:510px;top:469.18px;width:60px;height:12px">
<div class="t" style="left:0;top:2.65px;font-size:8.65px;color:#222">Range</div></div>
<svg style="left:389.5px;top:482.79px" width="9" height="9" viewBox="0 0 9 9"><rect x="0.5" y="0.5" width="8" height="8" fill="#fff" stroke="#333" stroke-width="0.9"/><path d="M2 4.5H7M4.5 2V7" stroke="#222"/></svg>
<div class="clip" style="left:400px;top:480.29px;width:48px;height:12px">
<div class="t" style="left:0.6px;top:2.65px;font-size:8.65px;color:#222">ForexHistory</div></div>
<div class="clip" style="left:449.5px;top:480.29px;width:59.5px;height:12px">
<div class="t" style="left:0.5px;top:2.65px;font-size:8.65px;color:#222"></div></div>
<div class="clip" style="left:510px;top:480.29px;width:60px;height:12px">
<div class="t" style="left:0;top:2.65px;font-size:8.65px;color:#222">Variant(1 to 11,</div></div>
<svg style="left:389.5px;top:493.9px" width="9" height="9" viewBox="0 0 9 9"><rect x="0.5" y="0.5" width="8" height="8" fill="#fff" stroke="#333" stroke-width="0.9"/><path d="M2 4.5H7M4.5 2V7" stroke="#222"/></svg>
<div class="clip" style="left:400px;top:491.4px;width:48px;height:12px">
<div class="t" style="left:0.6px;top:2.65px;font-size:8.65px;color:#222">ForexHistory</div></div>
<div class="clip" style="left:449.5px;top:491.4px;width:59.5px;height:12px">
<div class="t" style="left:0.5px;top:2.65px;font-size:8.65px;color:#222"></div></div>
<div class="clip" style="left:510px;top:491.4px;width:60px;height:12px">
<div class="t" style="left:0;top:2.65px;font-size:8.65px;color:#222">Variant(1 to 1, 1</div></div>
<div style="left:387px;top:663.5px;width:181px;height:17px;background:#bccbdb"></div>
<div class="t" style="left:388px;top:666.17px;font-size:9.45px;color:#222;font-weight:normal;">Properties - UpdateFOREX</div>
<div style="left:568px;top:663.5px;width:17px;height:17px;background:#fbfbfb;border:1px solid #8a8a8a;border-top-color:#fff;border-left-color:#fff"></div>
<svg style="left:571px;top:666.5px" width="11" height="11" viewBox="0 0 11 11"><path d="M1 1 L10 10 M10 1 L1 10" stroke="#000" stroke-width="1.9"/></svg>
<div style="left:387px;top:683.5px;width:197.5px;height:14px;background:#fff;border:1px solid #888;border-right-color:#ccc;border-bottom-color:#ccc"></div>
<div class="t" style="left:389px;top:686.44px;font-size:9.25px;color:#111;font-weight:normal;"><b>UpdateFOREX</b> Module</div>
<svg style="left:574px;top:688px" width="8" height="5" viewBox="0 0 8 5"><path d="M0.5 0.5 L4 4 L7.5 0.5" fill="none" stroke="#666" stroke-width="1"/></svg>
<div style="left:387px;top:699.5px;width:49px;height:15px;background:#f8f8f8;border-top:1px solid #fff;border-left:1px solid #fff;border-right:1px solid #ccc"></div>
<div class="t" style="left:391px;top:702.23px;font-size:8.9px;color:#222;font-weight:normal;">Alphabetic</div>
<div style="left:436px;top:701px;width:51.5px;height:13.5px;background:#ececec;border-right:1px solid #ccc"></div>
<div class="t" style="left:438.5px;top:703.23px;font-size:8.9px;color:#222;font-weight:normal;">Categorized</div>
<div style="left:387px;top:714.5px;width:198px;height:88px;background:#f0f0f0"></div>
<div style="left:388.5px;top:715.5px;width:195px;height:84px;background:#fff;border-top:1.5px solid #808080;border-left:1.5px solid #808080"></div>
<div style="left:390px;top:728px;width:193px;height:1px;background:#ccc"></div>
<div style="left:421.5px;top:716.5px;width:1px;height:12px;background:#ccc"></div>
<div class="t" style="left:390px;top:718.03px;font-size:8.9px;color:#222;font-weight:normal;">(Name)</div>
<div class="t" style="left:423px;top:718.03px;font-size:8.9px;color:#222;font-weight:normal;">UpdateFOREX</div>
<div style="left:583px;top:715px;width:2px;height:87px;background:#f0f0f0"></div>
<div style="left:589px;top:64px;width:838px;height:663px;background:#f0f0f0;border-left:1.5px solid #8a8a8a;border-top:1.5px solid #8a8a8a"></div>
<div style="left:595.5px;top:66px;width:410px;height:15px;background:#fff;border:1px solid #8a8a8a;border-right-color:#d0d0d0;border-bottom-color:#d0d0d0"></div>
<div class="t" style="left:597.5px;top:68.62px;font-size:9.15px;color:#111;font-weight:bold;">(General)</div>
<svg style="left:995px;top:71.5px" width="7" height="4" viewBox="0 0 7 4"><path d="M0.5 0.5 L3.5 3.5 L6.5 0.5" fill="none" stroke="#777" stroke-width="1"/></svg>
<div style="left:1010.5px;top:66px;width:410.5px;height:15px;background:#fff;border:1px solid #8a8a8a;border-right-color:#d0d0d0;border-bottom-color:#d0d0d0"></div>
<div class="t" style="left:1013px;top:68.62px;font-size:9.15px;color:#111;font-weight:bold;">UpdateForexHistory</div>
<svg style="left:1409.5px;top:71.5px" width="7" height="4" viewBox="0 0 7 4"><path d="M0.5 0.5 L3.5 3.5 L6.5 0.5" fill="none" stroke="#777" stroke-width="1"/></svg>
<div style="left:590px;top:82px;width:837px;height:630px;background:#fff;border-top:1.5px solid #7a7a7a"></div>
<div style="left:590px;top:83.5px;width:18px;height:628.5px;background:#f0f0f0"></div>
<div style="left:608px;top:83.5px;width:1px;height:628.5px;background:#8a8a8a"></div>
<div style="left:609.5px;top:94.8px;width:801px;height:1.8px;background:#e2e2e2"></div>
<div style="left:609.5px;top:83.5px;width:801.5px;height:628.5px;overflow:hidden">
<div class="code" style="left:5.5px;top:1.71px;"><span class="kw">End</span> <span class="kw">Sub</span></div>
<div class="code" style="left:5.5px;top:38.55px;"><span class="kw">Sub</span> UpdateForexHistory()</div>
<div class="code" style="left:5.5px;top:50.83px;"><span class="cm">&#x27;This routine will fetch the full history of exchange rates from our central assumptions file.</span></div>
<div class="code" style="left:5.5px;top:63.11px;"><span class="cm">&#x27;This is done to give the user full flexibility of when rates are updated.</span></div>
<div class="code" style="left:5.5px;top:87.67px;"><span class="cm">&#x27;Define this workbook</span></div>
<div class="code" style="left:5.5px;top:99.95px;"><span class="kw">Dim</span> ThisWB <span class="kw">As</span> Workbook</div>
<div class="code" style="left:5.5px;top:112.23px;"><span class="kw">Set</span> ThisWB = ActiveWorkbook</div>
<div class="code" style="left:5.5px;top:136.79px;"><span class="cm">&#x27;Define Data Source Workbook &amp; RangeName</span></div>
<div class="code" style="left:5.5px;top:149.07px;"><span class="kw">Dim</span> WB_assumptions <span class="kw">As</span> Workbook</div>
<div class="code" style="left:5.5px;top:161.35px;"><span class="kw">Dim</span> FilePath <span class="kw">As</span> <span class="kw">String</span></div>
<div class="code" style="left:5.5px;top:173.63px;"><span class="kw">Dim</span> FileName <span class="kw">As</span> <span class="kw">String</span></div>
<div class="code" style="left:5.5px;top:185.91px;"><span class="kw">Dim</span> RangeName <span class="kw">As</span> <span class="kw">String</span></div>
<div class="code" style="left:5.5px;top:198.19px;"><span class="kw">Dim</span> SourceRowCount <span class="kw">As</span> <span class="kw">Integer</span></div>
<div class="code" style="left:5.5px;top:210.47px;"><span class="kw">Dim</span> SourceColCount <span class="kw">As</span> <span class="kw">Integer</span></div>
<div class="code" style="left:5.5px;top:235.03px;"><span class="kw">Dim</span> NewTableRange <span class="kw">As</span> Range</div>
<div class="code" style="left:5.5px;top:259.59px;"><span class="cm">&#x27;Other Variable Declarations</span></div>
<div class="code" style="left:5.5px;top:271.87px;"><span class="kw">Dim</span> ForexHistoryArray() <span class="kw">As</span> <span class="kw">Variant</span></div>
<div class="code" style="left:5.5px;top:284.15px;"><span class="kw">Dim</span> ForexHistoryHeadersArray() <span class="kw">As</span> <span class="kw">Variant</span></div>
<div class="code" style="left:5.5px;top:308.71px;"><span class="cm">&#x27;Get the file location and check the filepath ending</span></div>
<div class="code" style="left:5.5px;top:320.99px;">FilePath = Range(&quot;Rates_FilePath&quot;).Value</div>
<div class="code" style="left:5.5px;top:333.27px;">FileName = Range(&quot;Rates_FileName&quot;).Value</div>
<div class="code" style="left:5.5px;top:345.55px;"><span class="kw">If</span> Right(FilePath, 1) &lt;&gt; &quot;\&quot; <span class="kw">Then</span> FilePath = FilePath &amp; &quot;\&quot;</div>
<div class="code" style="left:5.5px;top:370.11px;"><span class="cm">&#x27;Open the assumptions workbook and assign it to a variable</span></div>
<div class="code" style="left:5.5px;top:382.39px;"><span class="kw">Set</span> WB_assumptions = Workbooks.Open(FilePath &amp; FileName)</div>
<div class="code" style="left:5.5px;top:394.67px;">WB_assumptions.Worksheets(&quot;ForexHistory&quot;).Activate</div>
<div class="code" style="left:5.5px;top:431.51px;"><span class="cm">&#x27;Get the table data and close the workbook</span></div>
<div class="code" style="left:5.5px;top:443.79px;">ForexHistoryArray() = WB_assumptions.Worksheets(&quot;Forexhistory&quot;).ListObjects(&quot;ForexHistoryTable&quot;).DataBodyRange.Value</div>
<div class="code" style="left:5.5px;top:456.07px;">ForexHistoryHeadersArray() = WB_assumptions.Worksheets(&quot;Forexhistory&quot;).ListObjects(&quot;ForexHistoryTable&quot;).HeaderRowRange.</div>
<div class="code" style="left:5.5px;top:468.35px;">SourceRowCount = <span class="kw">UBound</span>(ForexHistoryArray(), 1)</div>
<div class="code" style="left:5.5px;top:480.63px;">SourceColCount = <span class="kw">UBound</span>(ForexHistoryArray(), 2)</div>
<div class="code" style="left:5.5px;top:492.91px;">WB_assumptions.Close (<span class="kw">False</span>)</div>
<div class="code" style="left:5.5px;top:517.47px;"><span class="cm">&#x27;reactivate the initial workbook to ensure the code knows exactly where we are</span></div>
<div class="code" style="left:5.5px;top:529.75px;">ThisWB.Activate</div>
<div class="code" style="left:5.5px;top:542.03px;">ws_ForexData.Activate</div>
<div class="code" style="left:5.5px;top:566.59px;"><span class="cm">&#x27;Update assumptions table with latest headers and latest data</span></div>
<div class="code" style="left:5.5px;top:578.87px;font-weight:bold;color:#111">Set NewTableRange = Range(&quot;ForexDataTable[#All]&quot;).</div>
<div class="code" style="left:5.5px;top:603.43px;"><span class="cm">&#x27;Loop through the rows of the table, looking for the end</span></div>
</div>
<svg style="left:594px;top:662px" width="13" height="11" viewBox="0 0 13 11"><path d="M6 0.5 Q0.5 0.5 0.5 5.5 Q0.5 10.5 6 10.5 L8 10.5 L8 9 L12.5 5.5 L8 2 L8 0.5 Z" fill="#800000" stroke="#200000" stroke-width="0.8"/><path d="M4 4 H7.5 V2.5 L11 5.5 L7.5 8.5 V7 H4 Z" fill="#f4e800"/></svg>
<div style="left:1410.5px;top:83.5px;width:16.5px;height:628.5px;background:#f0f0f0"></div>
<svg style="left:1414.5px;top:91.8px" width="9" height="5" viewBox="0 0 9 5"><path d="M0.7 4.5 L4.5 0.8 L8.3 4.5" fill="none" stroke="#555" stroke-width="1.2"/></svg>
<div style="left:1411px;top:411.8px;width:14px;height:248px;background:#cdcdcd"></div>
<svg style="left:1414.5px;top:702.5px" width="9" height="5" viewBox="0 0 9 5"><path d="M0.7 0.5 L4.5 4.2 L8.3 0.5" fill="none" stroke="#555" stroke-width="1.2"/></svg>
<div style="left:1410px;top:83.5px;width:16.5px;height:3.5px;background:#ececec;border:1px solid #888;border-top:none"></div>
<div style="left:590px;top:712px;width:837px;height:15px;background:#f0f0f0"></div>
<div style="left:590.5px;top:712.5px;width:16px;height:14px;background:#f0f0f0;border:1.5px solid #777;border-top:none;border-left:none"></div>
<div style="left:594px;top:716px;width:7px;height:1px;background:#888"></div>
<div style="left:594px;top:718px;width:7px;height:1px;background:#888"></div>
<div style="left:608px;top:711.5px;width:13.5px;height:14px;background:#f0f0f0;border-top:1.5px solid #777"></div>
<div style="left:609.8px;top:717px;width:2.5px;height:1px;background:#555"></div>
<div style="left:609.8px;top:719px;width:2.5px;height:1px;background:#555"></div>
<div style="left:609.8px;top:721px;width:2.5px;height:1px;background:#555"></div>
<div style="left:612.3px;top:716.8px;width:4.5px;height:4.7px;background:#333"></div>
<svg style="left:624.5px;top:715.5px" width="5" height="9" viewBox="0 0 5 9"><path d="M4.5 0.7 L0.8 4.5 L4.5 8.3" fill="none" stroke="#444" stroke-width="1.2"/></svg>
<div style="left:634.8px;top:713px;width:87px;height:13px;background:#cdcdcd"></div>
<svg style="left:1402.5px;top:715.5px" width="5" height="9" viewBox="0 0 5 9"><path d="M0.5 0.7 L4.2 4.5 L0.5 8.3" fill="none" stroke="#444" stroke-width="1.2"/></svg>
<div style="left:1420px;top:722px;width:1px;height:1px;background:#999"></div>
<div style="left:1422px;top:720px;width:1px;height:1px;background:#999"></div>
<div style="left:1422px;top:722px;width:1px;height:1px;background:#999"></div>
<div style="left:1418px;top:724px;width:1px;height:1px;background:#999"></div>
<div style="left:1420px;top:724px;width:1px;height:1px;background:#999"></div>
<div style="left:1422px;top:724px;width:1px;height:1px;background:#999"></div>
<div style="left:589px;top:732px;width:821px;height:19.5px;background:#bccbdb;border-bottom:1.5px solid #9a9a9a"></div>
<div class="t" style="left:590px;top:735.47px;font-size:9.8px;color:#222;font-weight:normal;">Immediate</div>
<div style="left:1410px;top:732px;width:17px;height:19px;background:#fbfbfb;border:1px solid #8a8a8a;border-top-color:#fff;border-left-color:#fff"></div>
<svg style="left:1413px;top:735px" width="11" height="11" viewBox="0 0 11 11"><path d="M1 1 L10 10 M10 1 L1 10" stroke="#000" stroke-width="1.9"/></svg>
<div style="left:589px;top:751.5px;width:838px;height:37px;background:#fff;border-left:1.5px solid #888"></div>
<div style="left:1411px;top:751.5px;width:16px;height:37px;background:#f0f0f0"></div>
<svg style="left:1414.5px;top:759px" width="9" height="5" viewBox="0 0 9 5"><path d="M0.7 4.5 L4.5 0.8 L8.3 4.5" fill="none" stroke="#555" stroke-width="1.2"/></svg>
<svg style="left:1414.5px;top:778px" width="9" height="5" viewBox="0 0 9 5"><path d="M0.7 0.5 L4.5 4.2 L8.3 0.5" fill="none" stroke="#555" stroke-width="1.2"/></svg>
<div style="left:589px;top:788px;width:838px;height:14px;background:#f0f0f0;border-left:1.5px solid #888"></div>
<svg style="left:595px;top:791px" width="5" height="9" viewBox="0 0 5 9"><path d="M4.5 0.7 L0.8 4.5 L4.5 8.3" fill="none" stroke="#444" stroke-width="1.2"/></svg>
<div style="left:605px;top:788.5px;width:93px;height:12.5px;background:#cdcdcd"></div>
<svg style="left:1403.5px;top:791px" width="5" height="9" viewBox="0 0 5 9"><path d="M0.5 0.7 L4.2 4.5 L0.5 8.3" fill="none" stroke="#444" stroke-width="1.2"/></svg>
<div style="left:950.5px;top:663px;width:1px;height:11px;background:#000"></div>
<svg style="left:953px;top:661px" width="9" height="15" viewBox="0 0 9 15"><path d="M1 0.5 H3.5 Q4.5 0.5 4.5 2 V13 Q4.5 14.5 3.5 14.5 H1 M8 0.5 H5.5 Q4.5 0.5 4.5 2 V13 Q4.5 14.5 5.5 14.5 H8" fill="none" stroke="#111" stroke-width="1.2"/></svg>
<div style="left:939px;top:673.5px;width:153px;height:92px;background:#fff;border:1px solid #888;border-right-color:#555;border-bottom-color:#555;box-shadow:1px 1px 0 #aaa"></div>
<svg style="left:940.5px;top:676.9px" width="15" height="10" viewBox="0 0 15 10"><path d="M1.5 5.5 H4.5 M0.5 7.5 H5" stroke="#aaa" stroke-width="0.8"/><path d="M5 3.8 L9 1.3 L14 3.8 L14 6 L10 8.5 L5 6 Z" fill="#30b030" stroke="#000" stroke-width="0.9"/><path d="M6.2 3.9 L9 2.4 L12.5 4.1" fill="none" stroke="#90e890" stroke-width="0.9"/><path d="M10 8.5 V6.2 L14 3.8" fill="none" stroke="#0a4a0a" stroke-width="0.7"/></svg>
<div class="t" style="left:958px;top:676.07px;font-size:9.8px;color:#111;font-weight:normal;">Activate</div>
<svg style="left:940.5px;top:689.67px" width="15" height="10" viewBox="0 0 15 10"><path d="M1.5 5.5 H4.5 M0.5 7.5 H5" stroke="#aaa" stroke-width="0.8"/><path d="M5 3.8 L9 1.3 L14 3.8 L14 6 L10 8.5 L5 6 Z" fill="#30b030" stroke="#000" stroke-width="0.9"/><path d="M6.2 3.9 L9 2.4 L12.5 4.1" fill="none" stroke="#90e890" stroke-width="0.9"/><path d="M10 8.5 V6.2 L14 3.8" fill="none" stroke="#0a4a0a" stroke-width="0.7"/></svg>
<div class="t" style="left:958px;top:688.84px;font-size:9.8px;color:#111;font-weight:normal;">AddComment</div>
<svg style="left:940.5px;top:702.4399999999999px" width="15" height="10" viewBox="0 0 15 10"><path d="M1.5 5.5 H4.5 M0.5 7.5 H5" stroke="#aaa" stroke-width="0.8"/><path d="M5 3.8 L9 1.3 L14 3.8 L14 6 L10 8.5 L5 6 Z" fill="#30b030" stroke="#000" stroke-width="0.9"/><path d="M6.2 3.9 L9 2.4 L12.5 4.1" fill="none" stroke="#90e890" stroke-width="0.9"/><path d="M10 8.5 V6.2 L14 3.8" fill="none" stroke="#0a4a0a" stroke-width="0.7"/></svg>
<div class="t" style="left:958px;top:701.61px;font-size:9.8px;color:#111;font-weight:normal;">AddCommentThreaded</div>
<svg style="left:941px;top:712.21px" width="14" height="13" viewBox="0 0 14 13"><rect x="0.6" y="3.6" width="9" height="8.8" fill="#fff" stroke="#000" stroke-width="1.2"/><path d="M3 3.6 L5 0.8 H11.5 V4" fill="#e0e0e0" stroke="#444" stroke-width="0.8"/><rect x="11.3" y="0.3" width="1.8" height="4.5" fill="#1a1aa0"/><path d="M2 8 H4 M5 8 H8 M2 10.5 H8" stroke="#000" stroke-width="1"/></svg>
<div class="t" style="left:958px;top:714.38px;font-size:9.8px;color:#111;font-weight:normal;">AddIndent</div>
<svg style="left:941px;top:724.98px" width="14" height="13" viewBox="0 0 14 13"><rect x="0.6" y="3.6" width="9" height="8.8" fill="#fff" stroke="#000" stroke-width="1.2"/><path d="M3 3.6 L5 0.8 H11.5 V4" fill="#e0e0e0" stroke="#444" stroke-width="0.8"/><rect x="11.3" y="0.3" width="1.8" height="4.5" fill="#1a1aa0"/><path d="M2 8 H4 M5 8 H8 M2 10.5 H8" stroke="#000" stroke-width="1"/></svg>
<div class="t" style="left:958px;top:727.15px;font-size:9.8px;color:#111;font-weight:normal;">Address</div>
<svg style="left:941px;top:737.75px" width="14" height="13" viewBox="0 0 14 13"><rect x="0.6" y="3.6" width="9" height="8.8" fill="#fff" stroke="#000" stroke-width="1.2"/><path d="M3 3.6 L5 0.8 H11.5 V4" fill="#e0e0e0" stroke="#444" stroke-width="0.8"/><rect x="11.3" y="0.3" width="1.8" height="4.5" fill="#1a1aa0"/><path d="M2 8 H4 M5 8 H8 M2 10.5 H8" stroke="#000" stroke-width="1"/></svg>
<div class="t" style="left:958px;top:739.92px;font-size:9.8px;color:#111;font-weight:normal;">AddressLocal</div>
<svg style="left:940.5px;top:753.52px" width="15" height="10" viewBox="0 0 15 10"><path d="M1.5 5.5 H4.5 M0.5 7.5 H5" stroke="#aaa" stroke-width="0.8"/><path d="M5 3.8 L9 1.3 L14 3.8 L14 6 L10 8.5 L5 6 Z" fill="#30b030" stroke="#000" stroke-width="0.9"/><path d="M6.2 3.9 L9 2.4 L12.5 4.1" fill="none" stroke="#90e890" stroke-width="0.9"/><path d="M10 8.5 V6.2 L14 3.8" fill="none" stroke="#0a4a0a" stroke-width="0.7"/></svg>
<div class="t" style="left:958px;top:752.69px;font-size:9.8px;color:#111;font-weight:normal;">AdvancedFilter</div>
<div style="left:956.5px;top:676px;width:120px;height:12.5px;border:1px dotted #999"></div>
<div style="left:1077px;top:674.5px;width:14px;height:90px;background:#f0f0f0"></div>
<svg style="left:1079.5px;top:678px" width="9" height="5" viewBox="0 0 9 5"><path d="M0.7 4.5 L4.5 0.8 L8.3 4.5" fill="none" stroke="#555" stroke-width="1.2"/></svg>
<div style="left:1078px;top:689.4px;width:12px;height:14.3px;background:#cdcdcd"></div>
<svg style="left:1079.5px;top:755px" width="9" height="5" viewBox="0 0 9 5"><path d="M0.7 0.5 L4.5 4.2 L8.3 0.5" fill="none" stroke="#555" stroke-width="1.2"/></svg>
</body></html>
